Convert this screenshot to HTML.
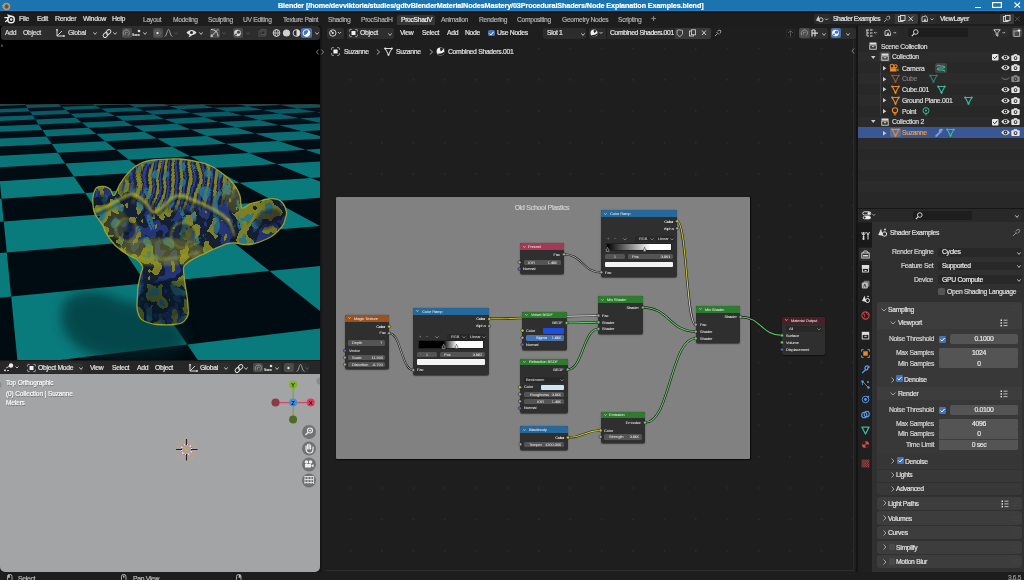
<!DOCTYPE html>
<html><head><meta charset="utf-8"><style>*{box-sizing:border-box}
html,body{margin:0;padding:0}
body{width:1024px;height:580px;overflow:hidden;background:#161616;position:relative;font-family:"Liberation Sans",sans-serif;color:#dcdcdc}
.a{position:absolute}
.t{position:absolute;white-space:nowrap;line-height:1;letter-spacing:-0.3px;will-change:transform;-webkit-text-stroke:0.2px currentColor}
svg{overflow:visible}
</style></head><body>
<div class="a" style="left:0.0px;top:0.0px;width:1024.0px;height:11.0px;background:#1d72b0;"></div>
<div class="a" style="left:0.0px;top:9.7px;width:1024.0px;height:1.2px;background:#1a80c8;"></div>
<svg class="a" style="left:1.0px;top:2.0px" width="10" height="8" viewBox="0 0 10 8"><circle cx="5.5" cy="4.5" r="3" fill="none" stroke="#f08a24" stroke-width="1.6"/><circle cx="5.5" cy="4.5" r="1.2" fill="#1f5a90"/><path d="M1 3.5 L4 3.6 M1.5 5.5 L3.5 5" stroke="#f08a24" stroke-width="1.1"/></svg>
<div class="t" style="left:277.5px;top:1.51px;font-size:7.2px;color:#ffffff;font-weight:bold;letter-spacing:-0.1px">Blender [/home/devviktoria/studies/gdtvBlenderMaterialNodesMastery/03ProceduralShaders/Node Explanation Examples.blend]</div>
<div class="a" style="left:975.0px;top:7.0px;width:5.5px;height:1.0px;background:#ffffff;"></div>
<svg class="a" style="left:992.0px;top:2.0px" width="10" height="6" viewBox="0 0 10 6"><rect x="0.6" y="0.6" width="8.8" height="4.8" fill="none" stroke="#fff" stroke-width="1.2"/></svg>
<svg class="a" style="left:1014.0px;top:2.0px" width="7" height="6" viewBox="0 0 7 6"><path d="M0.5 0.5 L6 5.5 M6 0.5 L0.5 5.5" stroke="#fff" stroke-width="1.1"/></svg>
<div class="a" style="left:0.0px;top:11.0px;width:1024.0px;height:15.0px;background:#1d1d1d;"></div>
<div class="a" style="left:0.0px;top:11.2px;width:1024.0px;height:1.4px;background:#1c1209;"></div>
<svg class="a" style="left:4.0px;top:13.5px" width="12" height="10" viewBox="0 0 12 10"><circle cx="7" cy="5.5" r="3.3" fill="none" stroke="#ececec" stroke-width="1.5"/><circle cx="7.2" cy="5.5" r="1.2" fill="#ececec"/><path d="M0.8 3.6 H5 M3.8 1 L7 2.4 M1.6 7.6 L4.2 5.6" stroke="#ececec" stroke-width="1.3" stroke-linecap="round"/></svg>
<div class="t" style="left:19.0px;top:15.07px;font-size:7px;color:#e0e0e0;">File</div>
<div class="t" style="left:37.0px;top:15.07px;font-size:7px;color:#e0e0e0;">Edit</div>
<div class="t" style="left:55.0px;top:15.07px;font-size:7px;color:#e0e0e0;">Render</div>
<div class="t" style="left:82.5px;top:15.07px;font-size:7px;color:#e0e0e0;">Window</div>
<div class="t" style="left:112.0px;top:15.07px;font-size:7px;color:#e0e0e0;">Help</div>
<div class="a" style="left:396.5px;top:14.5px;width:38.0px;height:10.5px;background:#363636;border-radius:2.5px 2.5px 0 0"></div>
<div class="t" style="left:143.0px;top:16.93px;font-size:6.7px;color:#b0b0b0;">Layout</div>
<div class="t" style="left:172.5px;top:16.93px;font-size:6.7px;color:#b0b0b0;">Modeling</div>
<div class="t" style="left:207.5px;top:16.93px;font-size:6.7px;color:#b0b0b0;">Sculpting</div>
<div class="t" style="left:243.0px;top:16.93px;font-size:6.7px;color:#b0b0b0;">UV Editing</div>
<div class="t" style="left:282.7px;top:16.93px;font-size:6.7px;color:#b0b0b0;">Texture Paint</div>
<div class="t" style="left:328.0px;top:16.93px;font-size:6.7px;color:#b0b0b0;">Shading</div>
<div class="t" style="left:361.0px;top:16.93px;font-size:6.7px;color:#b0b0b0;">ProcShadH</div>
<div class="t" style="left:401.0px;top:16.93px;font-size:6.7px;color:#f0f0f0;">ProcShadV</div>
<div class="t" style="left:440.7px;top:16.93px;font-size:6.7px;color:#b0b0b0;">Animation</div>
<div class="t" style="left:479.0px;top:16.93px;font-size:6.7px;color:#b0b0b0;">Rendering</div>
<div class="t" style="left:517.0px;top:16.93px;font-size:6.7px;color:#b0b0b0;">Compositing</div>
<div class="t" style="left:561.5px;top:16.93px;font-size:6.7px;color:#b0b0b0;">Geometry Nodes</div>
<div class="t" style="left:617.5px;top:16.93px;font-size:6.7px;color:#b0b0b0;">Scripting</div>
<div class="t" style="left:650.5px;top:14.88px;font-size:9px;color:#a0a0a0;">+</div>
<div class="a" style="left:813.5px;top:14.0px;width:16.5px;height:9.5px;background:#2c2c2c;border-radius:2px 0 0 2px"></div>
<svg class="a" style="left:815.0px;top:15.0px" width="14" height="8" viewBox="0 0 14 8"><path d="M3.5 0.5 L1 5.5 L5 6.5 Z" fill="#ccc"/><circle cx="6" cy="4.8" r="2" fill="none" stroke="#ccc" stroke-width="1"/><path d="M10 3.5 L11.5 5 L13 3.5" fill="none" stroke="#ccc" stroke-width="0.9"/></svg>
<div class="a" style="left:830.0px;top:14.0px;width:65.0px;height:9.5px;background:#282828;"></div>
<div class="t" style="left:833.0px;top:15.54px;font-size:6.8px;color:#e6e6e6;letter-spacing:-0.42px">Shader Examples</div>
<svg class="a" style="left:883.0px;top:15.0px" width="8" height="8" viewBox="0 0 8 8"><path d="M1 7 L3.5 4.5 M2.5 3 L5 5.5 M3.5 2 L6 1 L7 2 L6 4.5" stroke="#aaa" fill="none" stroke-width="0.9"/></svg>
<div class="a" style="left:895.0px;top:14.0px;width:22.5px;height:9.5px;background:#3a3a3a;border-radius:0 2px 2px 0"></div>
<svg class="a" style="left:897.0px;top:15.0px" width="20" height="8" viewBox="0 0 20 8"><rect x="1.5" y="1.5" width="4.5" height="5" fill="none" stroke="#ddd" stroke-width="0.9"/><rect x="3.5" y="0.5" width="4.5" height="5" fill="#3a3a3a" stroke="#ddd" stroke-width="0.9"/><path d="M11.5 1.5 L16 6 M16 1.5 L11.5 6" stroke="#ddd" stroke-width="0.9"/></svg>
<div class="a" style="left:919.5px;top:14.0px;width:16.0px;height:9.5px;background:#2c2c2c;border-radius:2px 0 0 2px"></div>
<svg class="a" style="left:921.0px;top:15.0px" width="14" height="8" viewBox="0 0 14 8"><path d="M1 2 L5 0.8 L6.5 3.5 L6.5 6.5 L1 6.5 Z" fill="none" stroke="#ccc" stroke-width="0.9"/><path d="M2.5 6 L4 3 L5.5 6Z" fill="#ccc"/><path d="M9.5 3.5 L11 5 L12.5 3.5" fill="none" stroke="#ccc" stroke-width="0.9"/></svg>
<div class="a" style="left:935.5px;top:14.0px;width:64.5px;height:9.5px;background:#282828;"></div>
<div class="t" style="left:940.0px;top:15.54px;font-size:6.8px;color:#e6e6e6;">ViewLayer</div>
<div class="a" style="left:1000.0px;top:14.0px;width:14.0px;height:9.5px;background:#3a3a3a;"></div>
<svg class="a" style="left:1002.0px;top:15.0px" width="10" height="8" viewBox="0 0 10 8"><rect x="1.5" y="1.5" width="4.5" height="5" fill="none" stroke="#ddd" stroke-width="0.9"/><rect x="3.5" y="0.5" width="4.5" height="5" fill="#3a3a3a" stroke="#ddd" stroke-width="0.9"/></svg>
<svg class="a" style="left:1014.0px;top:15.0px" width="8" height="8" viewBox="0 0 8 8"><path d="M1 1.5 L5.5 6 M5.5 1.5 L1 6" stroke="#555" stroke-width="0.9"/></svg>
<div class="a" style="left:0;top:26px;width:320px;height:334px;background:#000;overflow:hidden">
<svg class="a" style="left:0;top:-26px" width="320" height="360" viewBox="0 0 320 360"><defs><clipPath id="cp1"><rect x="0" y="104.3" width="320" height="260"/></clipPath><radialGradient id="shd" cx="0.5" cy="0.5" r="0.5"><stop offset="0" stop-color="#0a3e48" stop-opacity="0.85"/><stop offset="1" stop-color="#0a3e48" stop-opacity="0"/></radialGradient><linearGradient id="fog" x1="0" y1="0" x2="0" y2="1"><stop offset="0" stop-color="#001830" stop-opacity="0.4"/><stop offset="0.35" stop-color="#001830" stop-opacity="0.15"/><stop offset="1" stop-color="#001830" stop-opacity="0"/></linearGradient><pattern id="mk" width="9" height="9" patternUnits="userSpaceOnUse" patternTransform="rotate(70)"><rect width="9" height="9" fill="#2e3f6e"/><rect width="3.5" height="9" fill="#9a9a2a"/><rect x="5" width="1.5" height="9" fill="#3d9aa8" opacity="0.6"/></pattern></defs><rect x="0" y="104.3" width="320" height="260" fill="#010c12"/><path clip-path="url(#cp1)" d="M-136.5 311.2L11.2 296.6L6.8 252.4L-113.8 262.6ZM-98.2 229.2L3.7 221.5L1.5 198.7L-86.8 204.7ZM-78.1 186.0L-0.2 181.2L-1.6 167.3L-71.2 171.3ZM-65.7 159.4L-2.7 156.0L-3.6 146.7L-61.1 149.6ZM-57.3 141.4L-4.4 138.8L-5.1 132.1L-54.0 134.4ZM17.9 365.1L187.3 344.5L145.9 283.2L11.2 296.6ZM6.8 252.4L118.7 242.9L99.4 214.4L3.7 221.5ZM1.5 198.7L85.1 193.1L73.9 176.6L-0.2 181.2ZM-1.6 167.3L65.1 163.5L57.8 152.8L-2.7 156.0ZM-3.6 146.7L51.8 143.9L46.7 136.4L-4.4 138.8ZM-5.1 132.1L42.4 130.0L38.6 124.4L-5.6 126.3ZM-6.1 121.3L35.4 119.5L32.5 115.2L-6.6 116.9ZM-7.0 112.9L29.9 111.4L27.6 108.0L-7.3 109.4ZM-7.6 106.2L25.5 105.0L23.7 102.2L-7.9 103.4ZM257.7 448.7L454.4 417.1L339.2 326.1L187.3 344.5ZM145.9 283.2L269.5 271.0L222.9 234.1L118.7 242.9ZM99.4 214.4L189.4 207.6L164.2 187.8L85.1 193.1ZM73.9 176.6L144.6 172.3L128.9 159.8L65.1 163.5ZM57.8 152.8L116.1 149.7L105.3 141.2L51.8 143.9ZM46.7 136.4L96.2 134.0L88.4 127.8L42.4 130.0ZM38.6 124.4L81.7 122.5L75.7 117.8L35.4 119.5ZM32.5 115.2L70.5 113.7L65.9 110.0L29.9 111.4ZM27.6 108.0L61.7 106.7L58.0 103.8L25.5 105.0ZM23.7 102.2L54.6 101.1L51.5 98.7L22.0 99.7ZM339.2 326.1L476.1 309.4L383.3 259.7L269.5 271.0ZM222.9 234.1L320.0 225.9L274.2 201.3L189.4 207.6ZM164.2 187.8L239.4 182.7L212.1 168.1L144.6 172.3ZM128.9 159.8L190.2 156.3L172.1 146.7L116.1 149.7ZM105.3 141.2L157.0 138.6L144.2 131.7L96.2 134.0ZM88.4 127.8L133.1 125.8L123.5 120.7L81.7 122.5ZM75.7 117.8L115.1 116.1L107.7 112.2L70.5 113.7ZM65.9 110.0L101.0 108.6L95.1 105.4L61.7 106.7ZM58.0 103.8L89.7 102.6L84.9 100.0L54.6 101.1ZM383.3 259.7L488.2 249.3L410.9 218.2L320.0 225.9ZM274.2 201.3L354.2 195.3L310.8 177.9L239.4 182.7ZM212.1 168.1L276.6 164.1L249.0 153.0L190.2 156.3ZM172.1 146.7L226.1 143.8L206.9 136.1L157.0 138.6ZM144.2 131.7L190.6 129.5L176.5 123.8L133.1 125.8ZM123.5 120.7L164.2 118.9L153.4 114.5L115.1 116.1ZM107.7 112.2L143.9 110.7L135.4 107.3L101.0 108.6ZM95.1 105.4L127.8 104.2L120.9 101.4L89.7 102.6ZM84.9 100.0L114.6 98.9L108.9 96.6L80.5 97.6ZM310.8 177.9L378.8 173.3L338.3 160.3L276.6 164.1ZM249.0 153.0L305.4 149.7L278.2 141.0L226.1 143.8ZM206.9 136.1L255.2 133.6L235.6 127.3L190.6 129.5ZM176.5 123.8L218.6 121.9L203.8 117.1L164.2 118.9ZM153.4 114.5L190.8 112.9L179.3 109.2L143.9 110.7ZM135.4 107.3L169.0 105.9L159.7 102.9L127.8 104.2ZM120.9 101.4L151.3 100.3L143.8 97.8L114.6 98.9ZM338.3 160.3L397.4 156.7L359.7 146.6L305.4 149.7ZM278.2 141.0L328.4 138.3L301.9 131.2L255.2 133.6ZM235.6 127.3L279.2 125.2L259.6 120.0L218.6 121.9ZM203.8 117.1L242.4 115.4L227.3 111.4L190.8 112.9ZM179.3 109.2L213.8 107.8L201.8 104.6L169.0 105.9ZM159.7 102.9L191.0 101.7L181.2 99.1L151.3 100.3ZM143.8 97.8L172.3 96.8L164.2 94.6L136.8 95.6ZM301.9 131.2L347.1 129.0L321.5 123.2L279.2 125.2ZM259.6 120.0L299.4 118.2L280.0 113.8L242.4 115.4ZM227.3 111.4L262.8 109.9L247.6 106.4L213.8 107.8ZM201.8 104.6L233.9 103.3L221.6 100.6L191.0 101.7ZM181.2 99.1L210.5 98.0L200.4 95.7L172.3 96.8ZM321.5 123.2L362.6 121.2L338.1 116.4L299.4 118.2ZM280.0 113.8L316.6 112.1L297.5 108.4L262.8 109.9ZM247.6 106.4L280.5 105.1L265.3 102.1L233.9 103.3ZM221.6 100.6L251.6 99.4L239.2 97.0L210.5 98.0ZM200.4 95.7L227.9 94.7L217.5 92.7L191.1 93.6ZM338.1 116.4L375.8 114.6L352.2 110.6L316.6 112.1ZM297.5 108.4L331.4 107.0L312.8 103.8L280.5 105.1ZM265.3 102.1L296.1 100.9L281.0 98.3L251.6 99.4ZM239.2 97.0L267.3 95.9L254.9 93.7L227.9 94.7ZM312.8 103.8L344.3 102.5L326.2 99.7L296.1 100.9ZM281.0 98.3L309.8 97.1L294.9 94.9L267.3 95.9ZM254.9 93.7L281.4 92.8L269.0 90.9L243.5 91.8ZM326.2 99.7L355.6 98.5L338.0 96.1L309.8 97.1ZM294.9 94.9L322.0 93.8L307.4 91.8L281.4 92.8ZM338.0 96.1L365.6 95.0L348.5 92.8L322.0 93.8ZM307.4 91.8L332.9 90.9L318.6 89.1L294.0 90.0Z" fill="#0a7b7d"/><rect x="0" y="104.3" width="320" height="80" fill="url(#fog)"/><line x1="0" y1="104.5" x2="320" y2="104.5" stroke="#5a4030" stroke-width="0.6" opacity="0.7"/><path d="M66 300 C80 288 105 290 120 300 C150 305 180 315 188 335 C190 352 160 362 120 360 C90 358 68 345 62 325 C60 315 62 305 66 300 Z" fill="#04262c" opacity="0.6" filter="url(#blur2)"/><filter id="magic" x="70" y="140" width="240" height="210" filterUnits="userSpaceOnUse" color-interpolation-filters="sRGB"><feTurbulence type="fractalNoise" baseFrequency="0.022" numOctaves="2" seed="3" result="t"/><feDisplacementMap in="SourceGraphic" in2="t" scale="22" xChannelSelector="R" yChannelSelector="G"/><feGaussianBlur stdDeviation="0.5"/></filter><filter id="blotch" x="70" y="140" width="240" height="210" filterUnits="userSpaceOnUse" color-interpolation-filters="sRGB"><feTurbulence type="fractalNoise" baseFrequency="0.055 0.045" numOctaves="3" seed="4" result="n"/><feColorMatrix in="n" type="matrix" values="1 0 0 0 0  1 0 0 0 0  1 0 0 0 0  0 0 0 0 1"/><feComponentTransfer><feFuncR type="discrete" tableValues="0.08 0.20 0.54 0.09 0.16 0.55 0.08"/><feFuncG type="discrete" tableValues="0.11 0.50 0.55 0.13 0.22 0.56 0.11"/><feFuncB type="discrete" tableValues="0.18 0.55 0.14 0.21 0.50 0.14 0.18"/></feComponentTransfer><feGaussianBlur stdDeviation="0.5"/></filter><radialGradient id="domem" cx="0.5" cy="0.5" r="0.5"><stop offset="0.6" stop-color="#fff"/><stop offset="1" stop-color="#fff" stop-opacity="0"/></radialGradient><mask id="domemask" maskUnits="userSpaceOnUse" x="70" y="140" width="240" height="210"><ellipse cx="180" cy="182" rx="72" ry="32" fill="url(#domem)"/></mask><filter id="speck" x="70" y="140" width="240" height="210" filterUnits="userSpaceOnUse" color-interpolation-filters="sRGB"><feTurbulence type="turbulence" baseFrequency="0.09 0.06" numOctaves="1" seed="9" result="n"/><feColorMatrix in="n" type="matrix" values="0 0 0 0 0.22  0 0 0 0 0.52  0 0 0 0 0.60  10 0 0 0 -2.7" /></filter><clipPath id="mkc"><path d="M97.4 187.2C99.0 186.4 101.9 186.2 104.0 186.5C106.1 186.8 108.3 187.5 110.0 189.0C111.7 190.5 112.3 196.3 114.0 195.5C115.7 194.7 117.9 187.4 120.0 184.0C122.1 180.6 124.1 177.6 126.4 174.8C128.7 172.1 131.2 169.6 134.0 167.5C136.8 165.4 139.7 163.7 142.9 162.4C146.1 161.2 149.6 160.5 153.0 160.0C156.4 159.5 159.1 159.5 163.6 159.3C168.1 159.1 173.8 158.5 180.0 159.0C186.2 159.5 195.4 161.2 200.7 162.4C206.0 163.7 208.6 164.8 212.0 166.5C215.4 168.2 218.6 170.6 221.4 172.7C224.2 174.8 226.6 176.6 229.0 179.0C231.4 181.4 234.0 184.4 235.8 187.2C237.6 190.0 239.0 192.6 240.0 196.0C241.0 199.4 240.3 206.6 242.0 207.9C243.7 209.2 247.2 205.0 250.0 204.0C252.8 203.0 256.1 202.4 258.6 201.7C261.1 200.9 262.6 200.0 265.0 199.5C267.4 199.0 270.7 198.5 273.0 198.6C275.3 198.7 277.3 199.1 279.0 200.0C280.7 200.9 282.1 201.8 283.4 203.8C284.6 205.8 286.1 209.6 286.5 212.0C286.9 214.4 286.0 215.9 285.5 218.0C285.0 220.1 284.6 222.2 283.4 224.4C282.1 226.6 280.1 228.9 278.0 231.0C275.9 233.1 273.7 235.1 271.0 236.8C268.3 238.5 265.1 239.8 262.0 241.0C258.9 242.2 255.6 243.4 252.4 244.0C249.2 244.6 245.8 244.7 243.0 244.5C240.2 244.3 238.3 243.2 235.8 243.0C233.3 242.8 230.1 243.1 228.0 243.5C225.9 243.9 225.6 244.3 223.3 245.2C221.0 246.1 216.8 247.7 214.0 249.0C211.2 250.3 208.9 251.6 206.2 252.8C203.5 254.1 200.5 255.2 198.0 256.5C195.5 257.8 193.0 259.1 191.0 260.4C189.0 261.6 187.2 262.7 186.0 264.0C184.8 265.3 183.8 265.4 183.5 268.0C183.2 270.6 184.0 275.6 184.4 279.3C184.8 283.0 185.5 286.8 186.0 290.0C186.5 293.2 186.9 294.4 187.3 298.3C187.7 302.2 188.4 310.1 188.2 313.5C188.0 316.9 187.1 317.4 186.0 319.0C184.9 320.6 183.6 322.1 181.6 323.0C179.6 323.9 176.5 324.2 174.0 324.5C171.5 324.8 169.2 324.9 166.4 324.9C163.6 324.9 159.8 324.8 157.0 324.5C154.2 324.2 151.6 323.7 149.3 323.0C147.0 322.3 144.6 321.4 143.0 320.5C141.4 319.6 140.7 318.9 139.8 317.3C138.9 315.7 138.0 312.9 137.5 311.0C137.0 309.1 137.0 308.4 137.0 305.9C137.0 303.4 137.3 299.1 137.5 296.0C137.7 292.9 137.4 290.7 138.0 287.0C138.6 283.3 140.0 276.9 140.8 273.6C141.6 270.3 143.2 269.2 142.7 267.0C142.2 264.8 139.9 262.1 138.0 260.4C136.1 258.6 133.2 257.8 131.0 256.5C128.8 255.2 127.0 254.4 124.7 252.8C122.4 251.2 119.2 249.0 117.0 247.0C114.8 245.0 113.3 243.3 111.5 241.0C109.7 238.7 107.4 235.5 106.0 233.0C104.6 230.5 104.2 228.2 103.0 226.0C101.8 223.8 100.3 222.0 99.0 220.0C97.7 218.0 96.0 216.0 95.0 214.0C94.0 212.0 93.6 210.6 93.3 207.9C93.0 205.2 92.7 200.4 92.9 197.6C93.1 194.8 93.8 192.7 94.5 191.0C95.2 189.3 95.8 187.9 97.4 187.2Z"/></clipPath><filter id="blur2" x="-50%" y="-50%" width="200%" height="200%"><feGaussianBlur stdDeviation="6"/></filter><filter id="blur1" x="-20%" y="-20%" width="140%" height="140%"><feGaussianBlur stdDeviation="1.2"/></filter><radialGradient id="mshade" cx="0.45" cy="0.4" r="0.65"><stop offset="0.55" stop-color="#000" stop-opacity="0"/><stop offset="1" stop-color="#000" stop-opacity="0.45"/></radialGradient><g clip-path="url(#mkc)"><rect x="70" y="140" width="240" height="210" filter="url(#blotch)"/><g mask="url(#domemask)"><g filter="url(#magic)"><rect x="70" y="140" width="240" height="210" fill="#18223c"/><g transform="rotate(12 185 240)"><rect x="-70.0" y="60" width="3.2" height="360" fill="#8e8e26"/><rect x="-65.8" y="60" width="2.0" height="360" fill="#3446a0"/><rect x="-61.5" y="60" width="3.2" height="360" fill="#8e8e26"/><rect x="-57.3" y="60" width="2.0" height="360" fill="#3446a0"/><rect x="-53.0" y="60" width="3.2" height="360" fill="#8e8e26"/><rect x="-48.8" y="60" width="2.0" height="360" fill="#3446a0"/><rect x="-44.5" y="60" width="3.2" height="360" fill="#8e8e26"/><rect x="-40.3" y="60" width="2.0" height="360" fill="#3446a0"/><rect x="-36.0" y="60" width="3.2" height="360" fill="#8e8e26"/><rect x="-31.8" y="60" width="2.0" height="360" fill="#3446a0"/><rect x="-27.5" y="60" width="3.2" height="360" fill="#8e8e26"/><rect x="-23.3" y="60" width="2.0" height="360" fill="#3446a0"/><rect x="-19.0" y="60" width="3.2" height="360" fill="#8e8e26"/><rect x="-14.8" y="60" width="2.0" height="360" fill="#3446a0"/><rect x="-10.5" y="60" width="3.2" height="360" fill="#8e8e26"/><rect x="-6.3" y="60" width="2.0" height="360" fill="#3446a0"/><rect x="-2.0" y="60" width="3.2" height="360" fill="#8e8e26"/><rect x="2.2" y="60" width="2.0" height="360" fill="#3446a0"/><rect x="6.5" y="60" width="3.2" height="360" fill="#8e8e26"/><rect x="10.7" y="60" width="2.0" height="360" fill="#3446a0"/><rect x="15.0" y="60" width="3.2" height="360" fill="#8e8e26"/><rect x="19.2" y="60" width="2.0" height="360" fill="#3446a0"/><rect x="23.5" y="60" width="3.2" height="360" fill="#8e8e26"/><rect x="27.7" y="60" width="2.0" height="360" fill="#3446a0"/><rect x="32.0" y="60" width="3.2" height="360" fill="#8e8e26"/><rect x="36.2" y="60" width="2.0" height="360" fill="#3446a0"/><rect x="40.5" y="60" width="3.2" height="360" fill="#8e8e26"/><rect x="44.7" y="60" width="2.0" height="360" fill="#3446a0"/><rect x="49.0" y="60" width="3.2" height="360" fill="#8e8e26"/><rect x="53.2" y="60" width="2.0" height="360" fill="#3446a0"/><rect x="57.5" y="60" width="3.2" height="360" fill="#8e8e26"/><rect x="61.7" y="60" width="2.0" height="360" fill="#3446a0"/><rect x="66.0" y="60" width="3.2" height="360" fill="#8e8e26"/><rect x="70.2" y="60" width="2.0" height="360" fill="#3446a0"/><rect x="74.5" y="60" width="3.2" height="360" fill="#8e8e26"/><rect x="78.7" y="60" width="2.0" height="360" fill="#3446a0"/><rect x="83.0" y="60" width="3.2" height="360" fill="#8e8e26"/><rect x="87.2" y="60" width="2.0" height="360" fill="#3446a0"/><rect x="91.5" y="60" width="3.2" height="360" fill="#8e8e26"/><rect x="95.7" y="60" width="2.0" height="360" fill="#3446a0"/><rect x="100.0" y="60" width="3.2" height="360" fill="#8e8e26"/><rect x="104.2" y="60" width="2.0" height="360" fill="#3446a0"/><rect x="108.5" y="60" width="3.2" height="360" fill="#8e8e26"/><rect x="112.7" y="60" width="2.0" height="360" fill="#3446a0"/><rect x="117.0" y="60" width="3.2" height="360" fill="#8e8e26"/><rect x="121.2" y="60" width="2.0" height="360" fill="#3446a0"/><rect x="125.5" y="60" width="3.2" height="360" fill="#8e8e26"/><rect x="129.7" y="60" width="2.0" height="360" fill="#3446a0"/><rect x="134.0" y="60" width="3.2" height="360" fill="#8e8e26"/><rect x="138.2" y="60" width="2.0" height="360" fill="#3446a0"/><rect x="142.5" y="60" width="3.2" height="360" fill="#8e8e26"/><rect x="146.7" y="60" width="2.0" height="360" fill="#3446a0"/><rect x="151.0" y="60" width="3.2" height="360" fill="#8e8e26"/><rect x="155.2" y="60" width="2.0" height="360" fill="#3446a0"/><rect x="159.5" y="60" width="3.2" height="360" fill="#8e8e26"/><rect x="163.7" y="60" width="2.0" height="360" fill="#3446a0"/><rect x="168.0" y="60" width="3.2" height="360" fill="#8e8e26"/><rect x="172.2" y="60" width="2.0" height="360" fill="#3446a0"/><rect x="176.5" y="60" width="3.2" height="360" fill="#8e8e26"/><rect x="180.7" y="60" width="2.0" height="360" fill="#3446a0"/><rect x="185.0" y="60" width="3.2" height="360" fill="#8e8e26"/><rect x="189.2" y="60" width="2.0" height="360" fill="#3446a0"/><rect x="193.5" y="60" width="3.2" height="360" fill="#8e8e26"/><rect x="197.7" y="60" width="2.0" height="360" fill="#3446a0"/><rect x="202.0" y="60" width="3.2" height="360" fill="#8e8e26"/><rect x="206.2" y="60" width="2.0" height="360" fill="#3446a0"/><rect x="210.5" y="60" width="3.2" height="360" fill="#8e8e26"/><rect x="214.7" y="60" width="2.0" height="360" fill="#3446a0"/><rect x="219.0" y="60" width="3.2" height="360" fill="#8e8e26"/><rect x="223.2" y="60" width="2.0" height="360" fill="#3446a0"/><rect x="227.5" y="60" width="3.2" height="360" fill="#8e8e26"/><rect x="231.7" y="60" width="2.0" height="360" fill="#3446a0"/><rect x="236.0" y="60" width="3.2" height="360" fill="#8e8e26"/><rect x="240.2" y="60" width="2.0" height="360" fill="#3446a0"/><rect x="244.5" y="60" width="3.2" height="360" fill="#8e8e26"/><rect x="248.7" y="60" width="2.0" height="360" fill="#3446a0"/><rect x="253.0" y="60" width="3.2" height="360" fill="#8e8e26"/><rect x="257.2" y="60" width="2.0" height="360" fill="#3446a0"/><rect x="261.5" y="60" width="3.2" height="360" fill="#8e8e26"/><rect x="265.7" y="60" width="2.0" height="360" fill="#3446a0"/><rect x="270.0" y="60" width="3.2" height="360" fill="#8e8e26"/><rect x="274.2" y="60" width="2.0" height="360" fill="#3446a0"/><rect x="278.5" y="60" width="3.2" height="360" fill="#8e8e26"/><rect x="282.7" y="60" width="2.0" height="360" fill="#3446a0"/><rect x="287.0" y="60" width="3.2" height="360" fill="#8e8e26"/><rect x="291.2" y="60" width="2.0" height="360" fill="#3446a0"/><rect x="295.5" y="60" width="3.2" height="360" fill="#8e8e26"/><rect x="299.7" y="60" width="2.0" height="360" fill="#3446a0"/><rect x="304.0" y="60" width="3.2" height="360" fill="#8e8e26"/><rect x="308.2" y="60" width="2.0" height="360" fill="#3446a0"/><rect x="312.5" y="60" width="3.2" height="360" fill="#8e8e26"/><rect x="316.7" y="60" width="2.0" height="360" fill="#3446a0"/><rect x="321.0" y="60" width="3.2" height="360" fill="#8e8e26"/><rect x="325.2" y="60" width="2.0" height="360" fill="#3446a0"/><rect x="329.5" y="60" width="3.2" height="360" fill="#8e8e26"/><rect x="333.7" y="60" width="2.0" height="360" fill="#3446a0"/><rect x="338.0" y="60" width="3.2" height="360" fill="#8e8e26"/><rect x="342.2" y="60" width="2.0" height="360" fill="#3446a0"/><rect x="346.5" y="60" width="3.2" height="360" fill="#8e8e26"/><rect x="350.7" y="60" width="2.0" height="360" fill="#3446a0"/><rect x="355.0" y="60" width="3.2" height="360" fill="#8e8e26"/><rect x="359.2" y="60" width="2.0" height="360" fill="#3446a0"/><rect x="363.5" y="60" width="3.2" height="360" fill="#8e8e26"/><rect x="367.7" y="60" width="2.0" height="360" fill="#3446a0"/><rect x="372.0" y="60" width="3.2" height="360" fill="#8e8e26"/><rect x="376.2" y="60" width="2.0" height="360" fill="#3446a0"/><rect x="380.5" y="60" width="3.2" height="360" fill="#8e8e26"/><rect x="384.7" y="60" width="2.0" height="360" fill="#3446a0"/><rect x="389.0" y="60" width="3.2" height="360" fill="#8e8e26"/><rect x="393.2" y="60" width="2.0" height="360" fill="#3446a0"/><rect x="397.5" y="60" width="3.2" height="360" fill="#8e8e26"/><rect x="401.7" y="60" width="2.0" height="360" fill="#3446a0"/><rect x="406.0" y="60" width="3.2" height="360" fill="#8e8e26"/><rect x="410.2" y="60" width="2.0" height="360" fill="#3446a0"/><rect x="414.5" y="60" width="3.2" height="360" fill="#8e8e26"/><rect x="418.7" y="60" width="2.0" height="360" fill="#3446a0"/><rect x="423.0" y="60" width="3.2" height="360" fill="#8e8e26"/><rect x="427.2" y="60" width="2.0" height="360" fill="#3446a0"/><rect x="431.5" y="60" width="3.2" height="360" fill="#8e8e26"/><rect x="435.7" y="60" width="2.0" height="360" fill="#3446a0"/><rect x="440.0" y="60" width="3.2" height="360" fill="#8e8e26"/><rect x="444.2" y="60" width="2.0" height="360" fill="#3446a0"/><rect x="448.5" y="60" width="3.2" height="360" fill="#8e8e26"/><rect x="452.7" y="60" width="2.0" height="360" fill="#3446a0"/></g></g></g><rect x="70" y="140" width="240" height="210" filter="url(#speck)" opacity="0.8"/><rect x="80" y="150" width="220" height="190" fill="url(#mshade)"/><rect x="70" y="140" width="240" height="210" fill="#0e1628" opacity="0.1"/><g filter="url(#blur1)"><ellipse cx="268" cy="219" rx="14" ry="9" transform="rotate(-25 268 219)" fill="#0c1626" opacity="0.55"/><ellipse cx="103" cy="202" rx="5" ry="8" fill="#0c1626" opacity="0.5"/><ellipse cx="126.5" cy="230" rx="10" ry="11" fill="#0b1426" opacity="0.45"/><ellipse cx="184" cy="235" rx="12" ry="12" fill="#0b1426" opacity="0.45"/><ellipse cx="126.5" cy="230" rx="10.5" ry="11.5" fill="none" stroke="#a0a030" stroke-width="1.6" opacity="0.65"/><ellipse cx="126.5" cy="230" rx="6" ry="7" fill="none" stroke="#3a4aa0" stroke-width="1.2" opacity="0.6"/><ellipse cx="184" cy="235" rx="13" ry="13" fill="none" stroke="#a0a030" stroke-width="1.6" opacity="0.6"/><ellipse cx="184" cy="235" rx="8.5" ry="8.5" fill="none" stroke="#3a4aa0" stroke-width="1.2" opacity="0.6"/><ellipse cx="184" cy="235" rx="4.5" ry="4.5" fill="none" stroke="#8a8a28" stroke-width="1" opacity="0.5"/><path d="M96.0 211.0C98.3 210.0 104.7 207.4 109.8 204.8C114.9 202.2 122.3 197.2 126.4 195.5C130.5 193.8 131.5 193.5 134.6 194.5C137.7 195.5 141.9 198.8 145.0 201.7C148.1 204.6 150.1 211.3 153.2 212.0C156.3 212.7 160.5 208.2 163.6 205.8C166.7 203.4 168.7 199.3 171.8 197.6C174.9 195.9 178.8 195.2 182.2 195.5C185.6 195.8 188.3 197.9 192.4 199.6C196.5 201.3 202.1 203.4 206.9 205.8C211.7 208.2 217.6 211.2 221.4 214.0C225.2 216.8 227.5 218.7 229.6 222.4C231.7 226.1 233.3 233.7 234.0 236.0" fill="none" stroke="#b0b030" stroke-width="2.4" opacity="0.85"/><path d="M96.0 211.0C98.3 210.0 104.7 207.4 109.8 204.8C114.9 202.2 122.3 197.2 126.4 195.5C130.5 193.8 131.5 193.5 134.6 194.5C137.7 195.5 141.9 198.8 145.0 201.7C148.1 204.6 150.1 211.3 153.2 212.0C156.3 212.7 160.5 208.2 163.6 205.8C166.7 203.4 168.7 199.3 171.8 197.6C174.9 195.9 178.8 195.2 182.2 195.5C185.6 195.8 188.3 197.9 192.4 199.6C196.5 201.3 202.1 203.4 206.9 205.8C211.7 208.2 217.6 211.2 221.4 214.0C225.2 216.8 227.5 218.7 229.6 222.4C231.7 226.1 233.3 233.7 234.0 236.0" transform="translate(0,3.5)" fill="none" stroke="#0c1630" stroke-width="2.5" opacity="0.6"/><ellipse cx="160" cy="252" rx="46" ry="14" fill="#9a9a28" opacity="0.4"/><ellipse cx="115" cy="222" rx="12" ry="16" fill="#9a9a28" opacity="0.25"/><ellipse cx="162" cy="300" rx="22" ry="20" fill="#0c1626" opacity="0.25"/><ellipse cx="235" cy="195" rx="10" ry="18" fill="#9a9a28" opacity="0.3"/><path d="M120 250 C140 262 170 262 200 252" fill="none" stroke="#a0a02a" stroke-width="3" opacity="0.5"/><rect x="130" y="280" width="65" height="50" fill="#0c1626" opacity="0.35"/></g></g><path d="M97.4 187.2C99.0 186.4 101.9 186.2 104.0 186.5C106.1 186.8 108.3 187.5 110.0 189.0C111.7 190.5 112.3 196.3 114.0 195.5C115.7 194.7 117.9 187.4 120.0 184.0C122.1 180.6 124.1 177.6 126.4 174.8C128.7 172.1 131.2 169.6 134.0 167.5C136.8 165.4 139.7 163.7 142.9 162.4C146.1 161.2 149.6 160.5 153.0 160.0C156.4 159.5 159.1 159.5 163.6 159.3C168.1 159.1 173.8 158.5 180.0 159.0C186.2 159.5 195.4 161.2 200.7 162.4C206.0 163.7 208.6 164.8 212.0 166.5C215.4 168.2 218.6 170.6 221.4 172.7C224.2 174.8 226.6 176.6 229.0 179.0C231.4 181.4 234.0 184.4 235.8 187.2C237.6 190.0 239.0 192.6 240.0 196.0C241.0 199.4 240.3 206.6 242.0 207.9C243.7 209.2 247.2 205.0 250.0 204.0C252.8 203.0 256.1 202.4 258.6 201.7C261.1 200.9 262.6 200.0 265.0 199.5C267.4 199.0 270.7 198.5 273.0 198.6C275.3 198.7 277.3 199.1 279.0 200.0C280.7 200.9 282.1 201.8 283.4 203.8C284.6 205.8 286.1 209.6 286.5 212.0C286.9 214.4 286.0 215.9 285.5 218.0C285.0 220.1 284.6 222.2 283.4 224.4C282.1 226.6 280.1 228.9 278.0 231.0C275.9 233.1 273.7 235.1 271.0 236.8C268.3 238.5 265.1 239.8 262.0 241.0C258.9 242.2 255.6 243.4 252.4 244.0C249.2 244.6 245.8 244.7 243.0 244.5C240.2 244.3 238.3 243.2 235.8 243.0C233.3 242.8 230.1 243.1 228.0 243.5C225.9 243.9 225.6 244.3 223.3 245.2C221.0 246.1 216.8 247.7 214.0 249.0C211.2 250.3 208.9 251.6 206.2 252.8C203.5 254.1 200.5 255.2 198.0 256.5C195.5 257.8 193.0 259.1 191.0 260.4C189.0 261.6 187.2 262.7 186.0 264.0C184.8 265.3 183.8 265.4 183.5 268.0C183.2 270.6 184.0 275.6 184.4 279.3C184.8 283.0 185.5 286.8 186.0 290.0C186.5 293.2 186.9 294.4 187.3 298.3C187.7 302.2 188.4 310.1 188.2 313.5C188.0 316.9 187.1 317.4 186.0 319.0C184.9 320.6 183.6 322.1 181.6 323.0C179.6 323.9 176.5 324.2 174.0 324.5C171.5 324.8 169.2 324.9 166.4 324.9C163.6 324.9 159.8 324.8 157.0 324.5C154.2 324.2 151.6 323.7 149.3 323.0C147.0 322.3 144.6 321.4 143.0 320.5C141.4 319.6 140.7 318.9 139.8 317.3C138.9 315.7 138.0 312.9 137.5 311.0C137.0 309.1 137.0 308.4 137.0 305.9C137.0 303.4 137.3 299.1 137.5 296.0C137.7 292.9 137.4 290.7 138.0 287.0C138.6 283.3 140.0 276.9 140.8 273.6C141.6 270.3 143.2 269.2 142.7 267.0C142.2 264.8 139.9 262.1 138.0 260.4C136.1 258.6 133.2 257.8 131.0 256.5C128.8 255.2 127.0 254.4 124.7 252.8C122.4 251.2 119.2 249.0 117.0 247.0C114.8 245.0 113.3 243.3 111.5 241.0C109.7 238.7 107.4 235.5 106.0 233.0C104.6 230.5 104.2 228.2 103.0 226.0C101.8 223.8 100.3 222.0 99.0 220.0C97.7 218.0 96.0 216.0 95.0 214.0C94.0 212.0 93.6 210.6 93.3 207.9C93.0 205.2 92.7 200.4 92.9 197.6C93.1 194.8 93.8 192.7 94.5 191.0C95.2 189.3 95.8 187.9 97.4 187.2Z" fill="none" stroke="#a8a82a" stroke-width="1.3" opacity="0.9"/></svg>
<div class="a" style="left:1.0px;top:0.0px;width:319.0px;height:13.5px;background:#2d2d2d;border-radius:3px"></div>
</div>
<div class="t" style="left:5.0px;top:29.54px;font-size:6.8px;color:#dedede;">Add</div>
<div class="t" style="left:23.0px;top:29.54px;font-size:6.8px;color:#dedede;">Object</div>
<div class="a" style="left:50.0px;top:27.5px;width:51.0px;height:10.5px;background:#2c2c2c;border-radius:2px"></div>
<svg class="a" style="left:56.0px;top:29.0px" width="9" height="8" viewBox="0 0 9 8"><path d="M1 0.5 V7 H8" fill="none" stroke="#ddd" stroke-width="1"/><path d="M1 7 L6 2" stroke="#ddd" stroke-width="0.9"/><circle cx="1" cy="0.8" r="0.9" fill="#ddd"/><circle cx="8" cy="7" r="0.9" fill="#ddd"/></svg>
<div class="t" style="left:68.0px;top:29.54px;font-size:6.8px;color:#dedede;">Global</div>
<svg class="a" style="left:92.5px;top:32.0px" width="4" height="3" viewBox="0 0 4 3"><path d="M0.4 0.4 L2.0 2.4 L3.6 0.4" fill="none" stroke="#cfcfcf" stroke-width="0.9"/></svg>
<svg class="a" style="left:102.0px;top:29.0px" width="10" height="9" viewBox="0 0 10 9"><g transform="rotate(-45 5 4.5)" fill="none" stroke="#ddd" stroke-width="0.95"><rect x="0.3" y="2.6" width="5.4" height="3.8" rx="1.9"/><rect x="4.3" y="2.6" width="5.4" height="3.8" rx="1.9"/></g></svg>
<svg class="a" style="left:112.5px;top:32.0px" width="4" height="3" viewBox="0 0 4 3"><path d="M0.4 0.4 L2.0 2.4 L3.6 0.4" fill="none" stroke="#cfcfcf" stroke-width="0.9"/></svg>
<div class="a" style="left:120.5px;top:27.5px;width:28.0px;height:10.5px;background:#2c2c2c;border-radius:2px"></div>
<div class="a" style="left:121.5px;top:28.0px;width:10.0px;height:9.5px;background:#4a4a4a;border-radius:2px"></div>
<svg class="a" style="left:122.0px;top:29.0px" width="9" height="8" viewBox="0 0 9 8"><path d="M2 6.5 C0 4 2 0.5 5 1 C8 1.5 8 5 6 6.5 M3.5 5.5 C2.5 3.5 4 2.5 5.5 3.5" fill="none" stroke="#999" stroke-width="1"/></svg>
<svg class="a" style="left:132.0px;top:29.0px" width="10" height="8" viewBox="0 0 10 8"><path d="M1 4 V7 M1 6 H7 M4 5 V7 M7 5 V7" stroke="#ddd" stroke-width="1" fill="none"/><circle cx="7" cy="2" r="1.3" fill="#ddd"/></svg>
<svg class="a" style="left:142.5px;top:32.0px" width="4" height="3" viewBox="0 0 4 3"><path d="M0.4 0.4 L2.0 2.4 L3.6 0.4" fill="none" stroke="#cfcfcf" stroke-width="0.9"/></svg>
<div class="a" style="left:152.0px;top:27.5px;width:26.0px;height:10.5px;background:#2c2c2c;border-radius:2px"></div>
<div class="a" style="left:152.5px;top:28.0px;width:10.0px;height:9.5px;background:#4a4a4a;border-radius:2px"></div>
<svg class="a" style="left:153.0px;top:29.0px" width="9" height="8" viewBox="0 0 9 8"><circle cx="4.5" cy="4" r="1.2" fill="#ddd"/><circle cx="4.5" cy="4" r="3" fill="none" stroke="#777" stroke-width="0.6"/></svg>
<svg class="a" style="left:164.0px;top:29.0px" width="9" height="8" viewBox="0 0 9 8"><path d="M0.5 7.5 C3 7 3 0.5 4.5 0.5 C6 0.5 6 7 8.5 7.5" fill="none" stroke="#aaa" stroke-width="0.9"/></svg>
<svg class="a" style="left:173.5px;top:32.0px" width="4" height="3" viewBox="0 0 4 3"><path d="M0.4 0.4 L2.0 2.4 L3.6 0.4" fill="none" stroke="#555" stroke-width="0.9"/></svg>
<svg class="a" style="left:186.0px;top:29.0px" width="11" height="9" viewBox="0 0 11 9"><path d="M0.5 3.5 C3 0 8 0 10.5 3.5 C8 7 3 7 0.5 3.5Z" fill="#ddd"/><circle cx="5.5" cy="3.5" r="1.5" fill="#282828"/><path d="M4 5 L2.5 8.5 L6 6.5" fill="#ddd"/></svg>
<svg class="a" style="left:199.0px;top:32.0px" width="4" height="3" viewBox="0 0 4 3"><path d="M0.4 0.4 L2.0 2.4 L3.6 0.4" fill="none" stroke="#cfcfcf" stroke-width="0.9"/></svg>
<div class="a" style="left:208.5px;top:27.5px;width:21.0px;height:10.5px;background:#2c2c2c;border-radius:2px"></div>
<div class="a" style="left:209.5px;top:28.0px;width:10.0px;height:9.5px;background:#4a4a4a;border-radius:2px"></div>
<svg class="a" style="left:210.0px;top:29.0px" width="9" height="8" viewBox="0 0 9 8"><path d="M1 7.5 L8 0.5 M1 0.5 C5 0.5 8 3 8 7.5 M3 7 L1 7.5 L1.5 5.5" fill="none" stroke="#ddd" stroke-width="0.9"/></svg>
<svg class="a" style="left:222.0px;top:32.0px" width="4" height="3" viewBox="0 0 4 3"><path d="M0.4 0.4 L2.0 2.4 L3.6 0.4" fill="none" stroke="#555" stroke-width="0.9"/></svg>
<div class="a" style="left:232.0px;top:27.5px;width:21.0px;height:10.5px;background:#2c2c2c;border-radius:2px"></div>
<div class="a" style="left:232.5px;top:28.0px;width:10.0px;height:9.5px;background:#4a4a4a;border-radius:2px"></div>
<svg class="a" style="left:233.0px;top:29.0px" width="9" height="8" viewBox="0 0 9 8"><circle cx="4.5" cy="4" r="3.3" fill="#ddd"/><circle cx="5.5" cy="3.2" r="1.6" fill="#4a4a4a"/><circle cx="3" cy="5.5" r="1" fill="#4a4a4a"/></svg>
<svg class="a" style="left:246.0px;top:32.0px" width="4" height="3" viewBox="0 0 4 3"><path d="M0.4 0.4 L2.0 2.4 L3.6 0.4" fill="none" stroke="#555" stroke-width="0.9"/></svg>
<div class="a" style="left:257.0px;top:27.5px;width:11.0px;height:10.5px;background:#2c2c2c;border-radius:2px"></div>
<svg class="a" style="left:258.0px;top:29.0px" width="9" height="8" viewBox="0 0 9 8"><rect x="1" y="2" width="6" height="5" fill="none" stroke="#555" stroke-width="0.9"/><rect x="3" y="0.5" width="5" height="5" fill="none" stroke="#555" stroke-width="0.9"/></svg>
<div class="a" style="left:271.0px;top:27.5px;width:41.0px;height:10.5px;background:#2c2c2c;border-radius:2px"></div>
<svg class="a" style="left:272.0px;top:29.0px" width="9" height="8" viewBox="0 0 9 8"><circle cx="4.5" cy="4" r="3.4" fill="none" stroke="#ddd" stroke-width="0.9"/><ellipse cx="4.5" cy="4" rx="1.5" ry="3.4" fill="none" stroke="#ddd" stroke-width="0.8"/><path d="M1 4 H8" stroke="#ddd" stroke-width="0.8"/></svg>
<svg class="a" style="left:282.0px;top:29.0px" width="9" height="8" viewBox="0 0 9 8"><circle cx="4.5" cy="4" r="3.6" fill="#d0d0d0"/></svg>
<svg class="a" style="left:292.0px;top:29.0px" width="9" height="8" viewBox="0 0 9 8"><circle cx="4.5" cy="4" r="3.4" fill="none" stroke="#ddd" stroke-width="0.9"/><path d="M4.5 0.6 A3.4 3.4 0 0 1 4.5 7.4Z" fill="#ddd"/></svg>
<div class="a" style="left:301.0px;top:28.0px;width:10.5px;height:9.5px;background:#4772b3;border-radius:2px"></div>
<svg class="a" style="left:302.0px;top:29.0px" width="9" height="8" viewBox="0 0 9 8"><circle cx="4.5" cy="4" r="3.4" fill="none" stroke="#fff" stroke-width="0.9"/><path d="M6.5 1.5 A3 3 0 0 1 2 6.5 C4 6 6 4 6.5 1.5Z" fill="#fff"/></svg>
<svg class="a" style="left:314.5px;top:32.0px" width="4" height="3" viewBox="0 0 4 3"><path d="M0.4 0.4 L2.0 2.4 L3.6 0.4" fill="none" stroke="#cfcfcf" stroke-width="0.9"/></svg>
<div class="t" style="left:0.5px;top:41.92px;font-size:6px;color:#888;">›</div>
<div class="a" style="left:0.0px;top:360.0px;width:320.0px;height:1.0px;background:#161616;"></div>
<div class="a" style="left:0.0px;top:361.0px;width:320.0px;height:211.0px;background:#a3a4a6;border-radius:0 0 5px 5px"></div>
<div class="a" style="left:0.0px;top:361.0px;width:320.0px;height:13.0px;background:#272727;"></div>
<svg class="a" style="left:3.0px;top:363.0px" width="18" height="9" viewBox="0 0 18 9"><path d="M1 7.5 H3 M2 6 V8.5 M4 7.5 H6" stroke="#ccc" stroke-width="0.9"/><path d="M3 5 L7 3" stroke="#ccc" stroke-width="0.9"/><circle cx="8" cy="2.5" r="2.2" fill="#eee"/><path d="M12.5 3.5 L14 5 L15.5 3.5" fill="none" stroke="#ccc" stroke-width="0.9"/></svg>
<div class="a" style="left:26.0px;top:362.5px;width:57.0px;height:10.0px;background:#2e2e2e;border-radius:2px"></div>
<svg class="a" style="left:27.0px;top:363.5px" width="9" height="8" viewBox="0 0 9 8"><path d="M0.6 2.4 V1.4 Q0.6 0.4 1.6 0.4 H2.6 M6.4 0.4 H7.4 Q8.4 0.4 8.4 1.4 V2.4 M8.4 5.6 V6.6 Q8.4 7.6 7.4 7.6 H6.4 M2.6 7.6 H1.6 Q0.6 7.6 0.6 6.6 V5.6" fill="none" stroke="#ccc" stroke-width="0.8"/><rect x="2.5" y="2" width="4" height="4" rx="0.6" fill="#f0f0f0"/></svg>
<div class="t" style="left:38.0px;top:364.54px;font-size:6.8px;color:#e2e2e2;">Object Mode</div>
<svg class="a" style="left:78.5px;top:367.0px" width="4" height="3" viewBox="0 0 4 3"><path d="M0.4 0.4 L2.0 2.4 L3.6 0.4" fill="none" stroke="#cfcfcf" stroke-width="0.9"/></svg>
<div class="t" style="left:90.0px;top:364.54px;font-size:6.8px;color:#e2e2e2;">View</div>
<div class="t" style="left:112.0px;top:364.54px;font-size:6.8px;color:#e2e2e2;">Select</div>
<div class="t" style="left:137.0px;top:364.54px;font-size:6.8px;color:#e2e2e2;">Add</div>
<div class="t" style="left:155.0px;top:364.54px;font-size:6.8px;color:#e2e2e2;">Object</div>
<div class="a" style="left:187.5px;top:362.5px;width:42.0px;height:10.0px;background:#2e2e2e;border-radius:2px"></div>
<svg class="a" style="left:189.0px;top:363.5px" width="9" height="8" viewBox="0 0 9 8"><path d="M1 0.5 V7 H8" fill="none" stroke="#ddd" stroke-width="1"/><path d="M1 7 L6 2" stroke="#ddd" stroke-width="0.9"/><circle cx="1" cy="0.8" r="0.9" fill="#ddd"/><circle cx="8" cy="7" r="0.9" fill="#ddd"/></svg>
<div class="t" style="left:200.0px;top:364.54px;font-size:6.8px;color:#e2e2e2;">Global</div>
<svg class="a" style="left:224.0px;top:367.0px" width="4" height="3" viewBox="0 0 4 3"><path d="M0.4 0.4 L2.0 2.4 L3.6 0.4" fill="none" stroke="#cfcfcf" stroke-width="0.9"/></svg>
<svg class="a" style="left:234.0px;top:363.5px" width="10" height="9" viewBox="0 0 10 9"><g transform="rotate(-45 5 4.5)" fill="none" stroke="#ddd" stroke-width="0.95"><rect x="0.3" y="2.6" width="5.4" height="3.8" rx="1.9"/><rect x="4.3" y="2.6" width="5.4" height="3.8" rx="1.9"/></g></svg>
<svg class="a" style="left:244.0px;top:367.0px" width="4" height="3" viewBox="0 0 4 3"><path d="M0.4 0.4 L2.0 2.4 L3.6 0.4" fill="none" stroke="#cfcfcf" stroke-width="0.9"/></svg>
<div class="a" style="left:252.5px;top:362.5px;width:28.0px;height:10.0px;background:#2e2e2e;border-radius:2px"></div>
<div class="a" style="left:253.0px;top:362.7px;width:10.0px;height:9.6px;background:#4a4a4a;border-radius:2px"></div>
<svg class="a" style="left:253.5px;top:363.5px" width="9" height="8" viewBox="0 0 9 8"><path d="M2 6.5 C0 4 2 0.5 5 1 C8 1.5 8 5 6 6.5 M3.5 5.5 C2.5 3.5 4 2.5 5.5 3.5" fill="none" stroke="#999" stroke-width="1"/></svg>
<svg class="a" style="left:264.0px;top:363.5px" width="10" height="8" viewBox="0 0 10 8"><path d="M1 4 V7 M1 6 H7 M4 5 V7 M7 5 V7" stroke="#ddd" stroke-width="1" fill="none"/><circle cx="7" cy="2" r="1.3" fill="#ddd"/></svg>
<svg class="a" style="left:275.0px;top:367.0px" width="4" height="3" viewBox="0 0 4 3"><path d="M0.4 0.4 L2.0 2.4 L3.6 0.4" fill="none" stroke="#cfcfcf" stroke-width="0.9"/></svg>
<div class="a" style="left:283.0px;top:362.5px;width:26.0px;height:10.0px;background:#2e2e2e;border-radius:2px"></div>
<div class="a" style="left:283.5px;top:362.7px;width:10.0px;height:9.6px;background:#4a4a4a;border-radius:2px"></div>
<svg class="a" style="left:284.0px;top:363.5px" width="9" height="8" viewBox="0 0 9 8"><circle cx="4.5" cy="4" r="1.2" fill="#ddd"/></svg>
<svg class="a" style="left:296.0px;top:363.5px" width="9" height="8" viewBox="0 0 9 8"><path d="M0.5 7.5 C3 7 3 0.5 4.5 0.5 C6 0.5 6 7 8.5 7.5" fill="none" stroke="#aaa" stroke-width="0.9"/></svg>
<svg class="a" style="left:305.0px;top:367.0px" width="4" height="3" viewBox="0 0 4 3"><path d="M0.4 0.4 L2.0 2.4 L3.6 0.4" fill="none" stroke="#555" stroke-width="0.9"/></svg>
<div class="t" style="left:6.0px;top:380.20px;font-size:6.5px;color:#f8f8f8;text-shadow:0.5px 0.5px 0.6px rgba(0,0,0,0.35);letter-spacing:-0.15px">Top Orthographic</div>
<div class="t" style="left:6.0px;top:390.50px;font-size:6.5px;color:#f8f8f8;text-shadow:0.5px 0.5px 0.6px rgba(0,0,0,0.35);letter-spacing:-0.1px">(0) Collection | Suzanne</div>
<div class="t" style="left:6.0px;top:400.20px;font-size:6.5px;color:#f8f8f8;text-shadow:0.5px 0.5px 0.6px rgba(0,0,0,0.35);letter-spacing:-0.2px">Meters</div>
<svg class="a" style="left:-2.0px;top:381.0px" width="5" height="8" viewBox="0 0 5 8"><circle cx="0" cy="4" r="3.5" fill="#8a8a8a"/></svg>
<svg class="a" style="left:316.0px;top:377.0px" width="5" height="8" viewBox="0 0 5 8"><circle cx="4" cy="4" r="3.5" fill="#8c8c8c"/></svg>
<svg class="a" style="left:0;top:0" width="1024" height="580"><line x1="275.5" y1="402.6" x2="310.7" y2="402.6" stroke="#d4485a" stroke-width="1.1"/><line x1="293.1" y1="384.8" x2="293.1" y2="419.6" stroke="#7aa52a" stroke-width="1.1"/><circle cx="275.5" cy="402.6" r="4" fill="#8a3b45"/><circle cx="293.1" cy="419.6" r="4" fill="#4e6b22"/><circle cx="310.7" cy="402.6" r="4" fill="#de3c54"/><circle cx="293.1" cy="384.8" r="4" fill="#7fb51c"/><circle cx="293.1" cy="402.6" r="4" fill="#3f8ee0"/><text x="310.7" y="404.8" font-size="6" text-anchor="middle" fill="#3a1010" font-family="Liberation Sans" font-weight="bold">X</text><text x="293.1" y="387" font-size="6" text-anchor="middle" fill="#1d2a08" font-family="Liberation Sans" font-weight="bold">Y</text><text x="293.1" y="404.8" font-size="6" text-anchor="middle" fill="#0a1a30" font-family="Liberation Sans" font-weight="bold">Z</text><circle cx="309" cy="432" r="7" fill="#727272"/><circle cx="309" cy="448.6" r="7" fill="#727272"/><circle cx="309" cy="464.5" r="7" fill="#727272"/><circle cx="309" cy="480.5" r="7" fill="#727272"/><circle cx="310" cy="430.5" r="2.5" fill="none" stroke="#eee" stroke-width="1.1"/><path d="M308 432.5 L305.5 435" stroke="#eee" stroke-width="1.3"/><path d="M308.8 430.5 H311.2 M310 429.3 V431.7" stroke="#eee" stroke-width="0.7"/><path d="M306 449 L306 446 M307.5 449 L307.5 444.5 M309 449 L309 444 M310.5 449 L310.5 445 M306 448.5 C306 452 308 453 310 453 C312 453 313 451 313 449 L313 447" stroke="#eee" stroke-width="1.2" fill="none" stroke-linecap="round"/><circle cx="306.5" cy="462" r="1.8" fill="#eee"/><circle cx="310.5" cy="462" r="1.8" fill="#eee"/><rect x="305" y="464" width="6" height="3.5" fill="#eee"/><path d="M311 465.8 L313.5 464 V467.5Z" fill="#eee"/><path d="M304.5 476.5 H313.5 M304.5 479.5 H313.5 M304.5 482.5 H313.5 M305 476 V484 M308 476 V484 M311 476 V484 M313.5 476 V484" stroke="#eee" stroke-width="0.8" fill="none"/><path d="M178 452 C176 446 181 440 186 438 M192 441 C197 446 196 455 190 459 M178 455 C182 461 189 462 193 458" stroke="#e0a070" stroke-width="0.8" fill="none" opacity="0.7"/><circle cx="186.5" cy="449.5" r="5.2" fill="none" stroke="#fff" stroke-width="1.1"/><circle cx="186.5" cy="449.5" r="5.2" fill="none" stroke="#e04040" stroke-width="1.1" stroke-dasharray="1.6 1.6"/><path d="M176 449.5 H182 M191 449.5 H197.5 M186.5 439 V445 M186.5 454 V460.5" stroke="#222" stroke-width="1.1"/><circle cx="186.5" cy="449.5" r="1.2" fill="#f0a020"/></svg>
<div class="a" style="left:320.0px;top:26.0px;width:2.0px;height:546.0px;background:#161616;"></div>
<div class="a" style="left:322.0px;top:26.0px;width:535.0px;height:546.0px;background:#1e1e1e;"></div>
<svg class="a" style="left:322px;top:40px" width="535" height="532"><defs><pattern id="dots" width="31.4" height="31.4" patternUnits="userSpaceOnUse" x="27.7" y="7.7"><rect x="0" y="0" width="1.5" height="1.5" fill="#2d2d2d"/></pattern></defs><rect width="535" height="532" fill="url(#dots)"/></svg>
<div class="a" style="left:853.0px;top:40.0px;width:0.8px;height:532.0px;background:#2a2a2a;"></div>
<div class="a" style="left:855.5px;top:26.0px;width:2.5px;height:546.0px;background:#141414;"></div>
<div class="a" style="left:326.5px;top:27.5px;width:17.0px;height:11.0px;background:#2e2e2e;border-radius:2px"></div>
<svg class="a" style="left:329.0px;top:29.0px" width="14" height="8" viewBox="0 0 14 8"><circle cx="3.8" cy="4" r="3.2" fill="none" stroke="#ddd" stroke-width="0.9"/><path d="M3.8 4 L2 1.8" stroke="#ddd" stroke-width="1"/><circle cx="3.8" cy="4" r="1.1" fill="#ddd"/><path d="M9 3 L10.5 4.5 L12 3" fill="none" stroke="#ccc" stroke-width="0.9"/></svg>
<div class="a" style="left:347.0px;top:27.5px;width:47.0px;height:11.0px;background:#2e2e2e;border-radius:2px"></div>
<svg class="a" style="left:348.5px;top:29.0px" width="9" height="8" viewBox="0 0 9 8"><path d="M0.6 2.4 V1.4 Q0.6 0.4 1.6 0.4 H2.6 M6.4 0.4 H7.4 Q8.4 0.4 8.4 1.4 V2.4 M8.4 5.6 V6.6 Q8.4 7.6 7.4 7.6 H6.4 M2.6 7.6 H1.6 Q0.6 7.6 0.6 6.6 V5.6" fill="none" stroke="#ccc" stroke-width="0.8"/><rect x="2.5" y="2" width="4" height="4" rx="0.6" fill="#f0f0f0"/></svg>
<div class="t" style="left:360.0px;top:29.84px;font-size:6.8px;color:#e2e2e2;">Object</div>
<svg class="a" style="left:388.0px;top:32.5px" width="4" height="3" viewBox="0 0 4 3"><path d="M0.4 0.4 L2.0 2.4 L3.6 0.4" fill="none" stroke="#cfcfcf" stroke-width="0.9"/></svg>
<div class="t" style="left:400.0px;top:29.84px;font-size:6.8px;color:#e2e2e2;">View</div>
<div class="t" style="left:422.0px;top:29.84px;font-size:6.8px;color:#e2e2e2;">Select</div>
<div class="t" style="left:447.0px;top:29.84px;font-size:6.8px;color:#e2e2e2;">Add</div>
<div class="t" style="left:465.0px;top:29.84px;font-size:6.8px;color:#e2e2e2;">Node</div>
<div class="a" style="left:488.0px;top:29.5px;width:6.5px;height:6.5px;background:#4772b3;border-radius:1.5px"></div>
<svg class="a" style="left:488.0px;top:29.5px" width="7" height="7" viewBox="0 0 7 7"><path d="M1.3 3.5 L2.8 5 L5.6 1.8" fill="none" stroke="#fff" stroke-width="1"/></svg>
<div class="t" style="left:497.0px;top:29.84px;font-size:6.8px;color:#e2e2e2;">Use Nodes</div>
<div class="a" style="left:543.0px;top:27.5px;width:43.0px;height:11.0px;background:#2c2c2c;border-radius:2px"></div>
<div class="t" style="left:547.0px;top:29.84px;font-size:6.8px;color:#e2e2e2;">Slot 1</div>
<svg class="a" style="left:580.5px;top:32.5px" width="4" height="3" viewBox="0 0 4 3"><path d="M0.4 0.4 L2.0 2.4 L3.6 0.4" fill="none" stroke="#cfcfcf" stroke-width="0.9"/></svg>
<div class="a" style="left:588.5px;top:27.5px;width:17.5px;height:11.0px;background:#2c2c2c;border-radius:2px 0 0 2px"></div>
<svg class="a" style="left:590.0px;top:29.0px" width="15" height="8" viewBox="0 0 15 8"><circle cx="4" cy="4" r="3.5" fill="#f0f0f0"/><path d="M7.5 4 A3.5 3.5 0 0 1 1 5.9 C3 6.3 5.8 5.8 7.5 4Z" fill="#2c2c2c"/><path d="M4 0.5 C3.4 1.8 3.6 3.1 4.5 4 C5.8 3.1 6.7 1.8 6.4 1.4" fill="#2c2c2c"/><path d="M9.5 3 L11 4.5 L12.5 3" fill="none" stroke="#ccc" stroke-width="0.9"/></svg>
<div class="a" style="left:606.5px;top:27.5px;width:68.5px;height:11.0px;background:#282828;"></div>
<div class="t" style="left:609.5px;top:29.84px;font-size:6.8px;color:#e6e6e6;letter-spacing:-0.38px">Combined Shaders.001</div>
<div class="a" style="left:675.0px;top:27.5px;width:35.5px;height:11.0px;background:#3a3a3a;border-radius:0 2px 2px 0"></div>
<svg class="a" style="left:676.0px;top:29.0px" width="34" height="8" viewBox="0 0 34 8"><path d="M3 0.8 L6.5 1.5 L6.5 4.5 C6 6.5 4 7.5 3.8 7.5 C3.5 7.5 1 6.5 1 4.5 L1 1.5Z" fill="none" stroke="#ccc" stroke-width="0.8"/><rect x="13.5" y="2" width="4" height="5" fill="none" stroke="#ddd" stroke-width="0.8"/><rect x="15.5" y="0.8" width="4" height="5" fill="#3a3a3a" stroke="#ddd" stroke-width="0.8"/><path d="M26 1.5 L30 6 M30 1.5 L26 6" stroke="#ddd" stroke-width="0.9"/></svg>
<svg class="a" style="left:714.0px;top:29.0px" width="8" height="8" viewBox="0 0 8 8"><path d="M1 7 L3.5 4.5 M2.5 3 L5 5.5 M3.5 2 L6 1 L7 2 L6 4.5" stroke="#aaa" fill="none" stroke-width="0.9"/></svg>
<svg class="a" style="left:786.0px;top:29.0px" width="9" height="9" viewBox="0 0 9 9"><path d="M4.5 7.5 V2 M2 4 L4.5 1.5 L7 4" fill="none" stroke="#555" stroke-width="1"/><rect x="0.5" y="0.5" width="8" height="8" rx="1.5" fill="none" stroke="#333" stroke-width="0.6"/></svg>
<div class="a" style="left:798.5px;top:27.5px;width:29.0px;height:11.0px;background:#2e2e2e;border-radius:2px"></div>
<div class="a" style="left:799.0px;top:28.0px;width:10.5px;height:10.0px;background:#4a4a4a;border-radius:2px"></div>
<svg class="a" style="left:800.0px;top:29.0px" width="9" height="8" viewBox="0 0 9 8"><path d="M2 6.5 C0 4 2 0.5 5 1 C8 1.5 8 5 6 6.5 M3.5 5.5 C2.5 3.5 4 2.5 5.5 3.5" fill="none" stroke="#999" stroke-width="1"/></svg>
<svg class="a" style="left:810.5px;top:29.0px" width="10" height="8" viewBox="0 0 10 8"><path d="M1 1 V7.5 M1 4.2 H7 M4 1 V7.5 M1 1 H4" stroke="#ddd" stroke-width="1.2" fill="none"/></svg>
<svg class="a" style="left:822.0px;top:32.5px" width="4" height="3" viewBox="0 0 4 3"><path d="M0.4 0.4 L2.0 2.4 L3.6 0.4" fill="none" stroke="#cfcfcf" stroke-width="0.9"/></svg>
<div class="a" style="left:830.0px;top:27.5px;width:26.0px;height:11.0px;background:#2e2e2e;border-radius:2px"></div>
<div class="a" style="left:830.5px;top:28.0px;width:10.5px;height:10.0px;background:#4772b3;border-radius:2px"></div>
<svg class="a" style="left:831.0px;top:29.0px" width="9" height="8" viewBox="0 0 9 8"><circle cx="4.5" cy="4" r="3.3" fill="#fff"/><circle cx="5.5" cy="3.2" r="1.6" fill="#4772b3"/><circle cx="3" cy="5.5" r="1" fill="#4772b3"/></svg>
<svg class="a" style="left:846.0px;top:32.5px" width="4" height="3" viewBox="0 0 4 3"><path d="M0.4 0.4 L2.0 2.4 L3.6 0.4" fill="none" stroke="#cfcfcf" stroke-width="0.9"/></svg>
<svg class="a" style="left:331.0px;top:47.0px" width="9" height="9" viewBox="0 0 9 9"><path d="M0.6 2.8 V1.6 Q0.6 0.6 1.6 0.6 H2.8 M6.2 0.6 H7.4 Q8.4 0.6 8.4 1.6 V2.8 M8.4 6.2 V7.4 Q8.4 8.4 7.4 8.4 H6.2 M2.8 8.4 H1.6 Q0.6 8.4 0.6 7.4 V6.2" fill="none" stroke="#ccc" stroke-width="0.8"/><rect x="2.4" y="2.4" width="4.2" height="4.2" rx="0.6" fill="#f0f0f0"/></svg>
<div class="t" style="left:344.0px;top:48.54px;font-size:6.8px;color:#e0e0e0;">Suzanne</div>
<svg class="a" style="left:375.5px;top:48.5px" width="5" height="6" viewBox="0 0 5 6"><path d="M0.8 0.5 L3.6 3 L0.8 5.5" fill="none" stroke="#bbb" stroke-width="0.9"/></svg>
<svg class="a" style="left:384.0px;top:47.0px" width="9" height="9" viewBox="0 0 9 9"><path d="M1.2 1.5 L7.8 1.5 L4.5 7.8Z" fill="none" stroke="#e0e0e0" stroke-width="1"/><circle cx="1.2" cy="1.5" r="1.1" fill="#e0e0e0"/><circle cx="7.8" cy="1.5" r="1.1" fill="#e0e0e0"/><circle cx="4.5" cy="7.8" r="1.1" fill="#e0e0e0"/></svg>
<div class="t" style="left:396.0px;top:48.54px;font-size:6.8px;color:#e0e0e0;">Suzanne</div>
<svg class="a" style="left:428.5px;top:48.5px" width="5" height="6" viewBox="0 0 5 6"><path d="M0.8 0.5 L3.6 3 L0.8 5.5" fill="none" stroke="#bbb" stroke-width="0.9"/></svg>
<svg class="a" style="left:436.0px;top:47.0px" width="9" height="9" viewBox="0 0 9 9"><circle cx="4.5" cy="4.5" r="3.9" fill="#f0f0f0"/><path d="M8.4 4.5 A3.9 3.9 0 0 1 1.2 6.6 C3.5 7 6.5 6.5 8.4 4.5Z" fill="#1e1e1e"/><path d="M4.5 0.6 C3.8 2 4 3.5 5 4.5 C6.5 3.5 7.5 2 7.2 1.6" fill="#1e1e1e"/></svg>
<div class="t" style="left:448.0px;top:48.54px;font-size:6.8px;color:#e0e0e0;">Combined Shaders.001</div>
<div class="a" style="left:335.8px;top:197.0px;width:414.0px;height:261.5px;background:#818181;border-radius:1px;box-shadow:0.5px 0.8px 0.8px #0a0a0a"></div>
<div class="t" style="left:342.0px;width:400px;text-align:center;top:204.07px;font-size:7px;color:#cfcfcf;">Old School Plastics</div>
<svg class="a" style="left:0;top:0" width="1024" height="580"><defs><linearGradient id="lg1" gradientUnits="userSpaceOnUse" x1="489" y1="0" x2="598" y2="0"><stop offset="0" stop-color="#c8c829"/><stop offset="0.45" stop-color="#c8c829"/><stop offset="0.7" stop-color="#d0d0d0"/><stop offset="1" stop-color="#d0d0d0"/></linearGradient><linearGradient id="lg2" gradientUnits="userSpaceOnUse" x1="0" y1="222" x2="0" y2="325"><stop offset="0" stop-color="#c8c829"/><stop offset="0.5" stop-color="#c8c829"/><stop offset="0.8" stop-color="#cfcfcf"/><stop offset="1" stop-color="#cfcfcf"/></linearGradient></defs><path d="M389.2 333.2 C401.2 333.2 401.2 370.0 413.3 370.0" fill="none" stroke="#1a1a1a" stroke-width="2.0"/><path d="M389.2 333.2 C401.2 333.2 401.2 370.0 413.3 370.0" fill="none" stroke="#c8c8c8" stroke-width="0.8"/><path d="M489.3 318.7 C543.9 318.7 543.9 315.6 598.4 315.6" fill="none" stroke="#1a1a1a" stroke-width="2.3"/><path d="M489.3 318.7 C543.9 318.7 543.9 315.6 598.4 315.6" fill="none" stroke="url(#lg1)" stroke-width="1.1"/><path d="M564.0 254.3 C582.6 254.3 582.6 272.5 601.3 272.5" fill="none" stroke="#1a1a1a" stroke-width="2.0"/><path d="M564.0 254.3 C582.6 254.3 582.6 272.5 601.3 272.5" fill="none" stroke="#c8c8c8" stroke-width="0.8"/><path d="M677.3 221.6 C686.5 221.6 686.5 324.6 695.7 324.6" fill="none" stroke="#1a1a1a" stroke-width="2.3"/><path d="M677.3 221.6 C686.5 221.6 686.5 324.6 695.7 324.6" fill="none" stroke="url(#lg2)" stroke-width="1.1"/><path d="M566.6 322.9 C582.5 322.9 582.5 322.3 598.4 322.3" fill="none" stroke="#1a1a1a" stroke-width="2.3"/><path d="M566.6 322.9 C582.5 322.9 582.5 322.3 598.4 322.3" fill="none" stroke="#63c763" stroke-width="1.1"/><path d="M567.7 369.5 C583.0 369.5 583.0 328.9 598.4 328.9" fill="none" stroke="#1a1a1a" stroke-width="2.3"/><path d="M567.7 369.5 C583.0 369.5 583.0 328.9 598.4 328.9" fill="none" stroke="#63c763" stroke-width="1.1"/><path d="M643.0 307.5 C669.4 307.5 669.4 331.6 695.7 331.6" fill="none" stroke="#1a1a1a" stroke-width="2.3"/><path d="M643.0 307.5 C669.4 307.5 669.4 331.6 695.7 331.6" fill="none" stroke="#63c763" stroke-width="1.1"/><path d="M645.0 422.6 C670.4 422.6 670.4 338.4 695.7 338.4" fill="none" stroke="#1a1a1a" stroke-width="2.3"/><path d="M645.0 422.6 C670.4 422.6 670.4 338.4 695.7 338.4" fill="none" stroke="#63c763" stroke-width="1.1"/><path d="M740.5 317.0 C761.2 317.0 761.2 335.4 782.0 335.4" fill="none" stroke="#1a1a1a" stroke-width="2.3"/><path d="M740.5 317.0 C761.2 317.0 761.2 335.4 782.0 335.4" fill="none" stroke="#63c763" stroke-width="1.1"/><path d="M568.0 437.5 C584.2 437.5 584.2 430.4 600.5 430.4" fill="none" stroke="#1a1a1a" stroke-width="2.3"/><path d="M568.0 437.5 C584.2 437.5 584.2 430.4 600.5 430.4" fill="none" stroke="#c8c829" stroke-width="1.1"/></svg>
<div class="a" style="left:344.8px;top:315.1px;width:44.4px;height:54.3px;background:#2f2f2f;border-radius:2px;box-shadow:0 0.5px 1.2px rgba(0,0,0,0.55);overflow:hidden"><div class="a" style="left:0;top:0;width:100%;height:6.8px;background:#9a521f"></div></div>
<svg class="a" style="left:347.8px;top:317.4px" width="3" height="2" viewBox="0 0 3 2"><path d="M0.2 0.2 L1.4 1.6 L2.6 0.2" fill="none" stroke="#ddd" stroke-width="0.6"/></svg>
<div class="t" style="left:353.6px;top:316.70px;font-size:7.80px;transform:scale(0.5000);transform-origin:left top;color:#e8e8e8;letter-spacing:-0.05px;-webkit-text-stroke:0.1px currentColor">Magic Texture</div>
<div class="t" style="right:638.6px;top:324.80px;font-size:7.80px;transform:scale(0.5000);transform-origin:right top;color:#ececec;letter-spacing:-0.05px;-webkit-text-stroke:0.1px currentColor">Color</div>
<div class="t" style="right:638.6px;top:331.40px;font-size:7.80px;transform:scale(0.5000);transform-origin:right top;color:#ececec;letter-spacing:-0.05px;-webkit-text-stroke:0.1px currentColor">Fac</div>
<div class="a" style="left:348.3px;top:340.0px;width:37.2px;height:5.6px;background:#545454;border-radius:1.5px"></div>
<div class="t" style="left:352.3px;top:341.10px;font-size:7.80px;transform:scale(0.5000);transform-origin:left top;color:#e0e0e0;letter-spacing:-0.05px;-webkit-text-stroke:0.1px currentColor">Depth</div>
<div class="t" style="right:641.5px;top:341.10px;font-size:7.80px;transform:scale(0.5000);transform-origin:right top;color:#e0e0e0;letter-spacing:-0.05px;-webkit-text-stroke:0.1px currentColor">7</div>
<div class="t" style="left:348.6px;top:348.80px;font-size:7.80px;transform:scale(0.5000);transform-origin:left top;color:#ececec;letter-spacing:-0.05px;-webkit-text-stroke:0.1px currentColor">Vector</div>
<div class="a" style="left:348.3px;top:354.8px;width:37.2px;height:5.6px;background:#545454;border-radius:1.5px"></div>
<div class="t" style="left:352.3px;top:355.90px;font-size:7.80px;transform:scale(0.5000);transform-origin:left top;color:#e0e0e0;letter-spacing:-0.05px;-webkit-text-stroke:0.1px currentColor">Scale</div>
<div class="t" style="right:641.5px;top:355.90px;font-size:7.80px;transform:scale(0.5000);transform-origin:right top;color:#e0e0e0;letter-spacing:-0.05px;-webkit-text-stroke:0.1px currentColor">11.900</div>
<div class="a" style="left:348.3px;top:361.6px;width:37.2px;height:5.6px;background:#545454;border-radius:1.5px"></div>
<div class="t" style="left:352.3px;top:362.70px;font-size:7.80px;transform:scale(0.5000);transform-origin:left top;color:#e0e0e0;letter-spacing:-0.05px;-webkit-text-stroke:0.1px currentColor">Distortion</div>
<div class="t" style="right:641.5px;top:362.70px;font-size:7.80px;transform:scale(0.5000);transform-origin:right top;color:#e0e0e0;letter-spacing:-0.05px;-webkit-text-stroke:0.1px currentColor">-0.700</div>
<div class="a" style="left:413.3px;top:308.0px;width:76.0px;height:66.5px;background:#2f2f2f;border-radius:2px;box-shadow:0 0.5px 1.2px rgba(0,0,0,0.55);overflow:hidden"><div class="a" style="left:0;top:0;width:100%;height:6.8px;background:#27689a"></div></div>
<svg class="a" style="left:416.3px;top:310.3px" width="3" height="2" viewBox="0 0 3 2"><path d="M0.2 0.2 L1.4 1.6 L2.6 0.2" fill="none" stroke="#ddd" stroke-width="0.6"/></svg>
<div class="t" style="left:422.1px;top:309.60px;font-size:7.80px;transform:scale(0.5000);transform-origin:left top;color:#e8e8e8;letter-spacing:-0.05px;-webkit-text-stroke:0.1px currentColor">Color Ramp</div>
<div class="t" style="right:538.5px;top:317.20px;font-size:7.80px;transform:scale(0.5000);transform-origin:right top;color:#ececec;letter-spacing:-0.05px;-webkit-text-stroke:0.1px currentColor">Color</div>
<div class="t" style="right:538.5px;top:324.20px;font-size:7.80px;transform:scale(0.5000);transform-origin:right top;color:#ececec;letter-spacing:-0.05px;-webkit-text-stroke:0.1px currentColor">Alpha</div>
<div class="t" style="left:419.3px;top:335.10px;font-size:7.80px;transform:scale(0.5000);transform-origin:left top;color:#aaa;letter-spacing:-0.05px;-webkit-text-stroke:0.1px currentColor">+</div>
<div class="t" style="left:426.3px;top:335.10px;font-size:7.80px;transform:scale(0.5000);transform-origin:left top;color:#aaa;letter-spacing:-0.05px;-webkit-text-stroke:0.1px currentColor">−</div>
<svg class="a" style="left:434.8px;top:335.8px" width="4" height="3" viewBox="0 0 4 3"><path d="M0.3 0.3 L2 2 L3.7 0.3" fill="none" stroke="#aaa" stroke-width="0.6"/></svg>
<div class="a" style="left:447.3px;top:333.8px;width:19.0px;height:6.0px;background:#282828;border-radius:1.5px"></div>
<div class="t" style="left:451.3px;top:335.10px;font-size:7.80px;transform:scale(0.5000);transform-origin:left top;color:#ddd;letter-spacing:-0.05px;-webkit-text-stroke:0.1px currentColor">RGB</div>
<svg class="a" style="left:461.8px;top:336.0px" width="4" height="3" viewBox="0 0 4 3"><path d="M0.3 0.3 L2 2 L3.7 0.3" fill="none" stroke="#aaa" stroke-width="0.6"/></svg>
<div class="a" style="left:466.8px;top:333.8px;width:19.0px;height:6.0px;background:#282828;border-radius:1.5px"></div>
<div class="t" style="left:470.3px;top:335.10px;font-size:7.80px;transform:scale(0.5000);transform-origin:left top;color:#ddd;letter-spacing:-0.05px;-webkit-text-stroke:0.1px currentColor">Linear</div>
<svg class="a" style="left:481.8px;top:336.0px" width="4" height="3" viewBox="0 0 4 3"><path d="M0.3 0.3 L2 2 L3.7 0.3" fill="none" stroke="#aaa" stroke-width="0.6"/></svg>
<div class="a" style="left:419.0px;top:341.4px;width:63.5px;height:6.6px;background:linear-gradient(90deg,#000 0%,#000 38%,#fff 59%,#fff 100%);box-shadow:0 0 0 0.6px #1a1a1a"></div>
<svg class="a" style="left:441.9px;top:344.3px" width="3.2" height="4.8" viewBox="0 0 3.2 4.8"><path d="M1.6 0 V1.5" stroke="#ddd" stroke-width="0.5"/><path d="M0.3 2.2 L1.6 1.1 L2.9 2.2 V4.4 H0.3Z" fill="#222" stroke="#ddd" stroke-width="0.5"/></svg>
<svg class="a" style="left:454.9px;top:344.3px" width="3.2" height="4.8" viewBox="0 0 3.2 4.8"><path d="M1.6 0 V1.5" stroke="#222" stroke-width="0.5"/><path d="M0.3 2.2 L1.6 1.1 L2.9 2.2 V4.4 H0.3Z" fill="#eee" stroke="#222" stroke-width="0.5"/></svg>
<div class="a" style="left:417.3px;top:352.0px;width:19.5px;height:4.8px;background:#545454;border-radius:1.5px"></div>
<div class="t" style="left:226.8px;width:400px;text-align:center;top:352.70px;font-size:7.80px;transform:scale(0.5000);transform-origin:center top;color:#ddd;letter-spacing:-0.05px;-webkit-text-stroke:0.1px currentColor">1</div>
<div class="a" style="left:440.3px;top:352.0px;width:45.0px;height:4.8px;background:#545454;border-radius:1.5px"></div>
<div class="t" style="left:444.3px;top:352.70px;font-size:7.80px;transform:scale(0.5000);transform-origin:left top;color:#e0e0e0;letter-spacing:-0.05px;-webkit-text-stroke:0.1px currentColor">Pos</div>
<div class="t" style="right:541.7px;top:352.70px;font-size:7.80px;transform:scale(0.5000);transform-origin:right top;color:#e0e0e0;letter-spacing:-0.05px;-webkit-text-stroke:0.1px currentColor">0.582</div>
<div class="a" style="left:417.3px;top:359.3px;width:68.0px;height:5.8px;background:#f4f4f4;border-radius:1px"></div>
<div class="t" style="left:417.1px;top:368.20px;font-size:7.80px;transform:scale(0.5000);transform-origin:left top;color:#ececec;letter-spacing:-0.05px;-webkit-text-stroke:0.1px currentColor">Fac</div>
<div class="a" style="left:601.3px;top:210.3px;width:76.0px;height:66.5px;background:#2f2f2f;border-radius:2px;box-shadow:0 0.5px 1.2px rgba(0,0,0,0.55);overflow:hidden"><div class="a" style="left:0;top:0;width:100%;height:6.8px;background:#27689a"></div></div>
<svg class="a" style="left:604.3px;top:212.6px" width="3" height="2" viewBox="0 0 3 2"><path d="M0.2 0.2 L1.4 1.6 L2.6 0.2" fill="none" stroke="#ddd" stroke-width="0.6"/></svg>
<div class="t" style="left:610.1px;top:211.90px;font-size:7.80px;transform:scale(0.5000);transform-origin:left top;color:#e8e8e8;letter-spacing:-0.05px;-webkit-text-stroke:0.1px currentColor">Color Ramp</div>
<div class="t" style="right:350.5px;top:219.50px;font-size:7.80px;transform:scale(0.5000);transform-origin:right top;color:#ececec;letter-spacing:-0.05px;-webkit-text-stroke:0.1px currentColor">Color</div>
<div class="t" style="right:350.5px;top:226.50px;font-size:7.80px;transform:scale(0.5000);transform-origin:right top;color:#ececec;letter-spacing:-0.05px;-webkit-text-stroke:0.1px currentColor">Alpha</div>
<div class="t" style="left:607.3px;top:237.40px;font-size:7.80px;transform:scale(0.5000);transform-origin:left top;color:#aaa;letter-spacing:-0.05px;-webkit-text-stroke:0.1px currentColor">+</div>
<div class="t" style="left:614.3px;top:237.40px;font-size:7.80px;transform:scale(0.5000);transform-origin:left top;color:#aaa;letter-spacing:-0.05px;-webkit-text-stroke:0.1px currentColor">−</div>
<svg class="a" style="left:622.8px;top:238.1px" width="4" height="3" viewBox="0 0 4 3"><path d="M0.3 0.3 L2 2 L3.7 0.3" fill="none" stroke="#aaa" stroke-width="0.6"/></svg>
<div class="a" style="left:635.3px;top:236.1px;width:19.0px;height:6.0px;background:#282828;border-radius:1.5px"></div>
<div class="t" style="left:639.3px;top:237.40px;font-size:7.80px;transform:scale(0.5000);transform-origin:left top;color:#ddd;letter-spacing:-0.05px;-webkit-text-stroke:0.1px currentColor">RGB</div>
<svg class="a" style="left:649.8px;top:238.3px" width="4" height="3" viewBox="0 0 4 3"><path d="M0.3 0.3 L2 2 L3.7 0.3" fill="none" stroke="#aaa" stroke-width="0.6"/></svg>
<div class="a" style="left:654.8px;top:236.1px;width:19.0px;height:6.0px;background:#282828;border-radius:1.5px"></div>
<div class="t" style="left:658.3px;top:237.40px;font-size:7.80px;transform:scale(0.5000);transform-origin:left top;color:#ddd;letter-spacing:-0.05px;-webkit-text-stroke:0.1px currentColor">Linear</div>
<svg class="a" style="left:669.8px;top:238.3px" width="4" height="3" viewBox="0 0 4 3"><path d="M0.3 0.3 L2 2 L3.7 0.3" fill="none" stroke="#aaa" stroke-width="0.6"/></svg>
<div class="a" style="left:607.0px;top:243.7px;width:63.5px;height:6.6px;background:linear-gradient(90deg,#000 0%,#fff 68%,#fff 100%);box-shadow:0 0 0 0.6px #1a1a1a"></div>
<svg class="a" style="left:605.9px;top:246.6px" width="3.2" height="4.8" viewBox="0 0 3.2 4.8"><path d="M1.6 0 V1.5" stroke="#ddd" stroke-width="0.5"/><path d="M0.3 2.2 L1.6 1.1 L2.9 2.2 V4.4 H0.3Z" fill="#222" stroke="#ddd" stroke-width="0.5"/></svg>
<svg class="a" style="left:643.4px;top:246.6px" width="3.2" height="4.8" viewBox="0 0 3.2 4.8"><path d="M1.6 0 V1.5" stroke="#222" stroke-width="0.5"/><path d="M0.3 2.2 L1.6 1.1 L2.9 2.2 V4.4 H0.3Z" fill="#ccc" stroke="#222" stroke-width="0.5"/></svg>
<div class="a" style="left:605.3px;top:254.3px;width:19.5px;height:4.8px;background:#545454;border-radius:1.5px"></div>
<div class="t" style="left:414.8px;width:400px;text-align:center;top:255.00px;font-size:7.80px;transform:scale(0.5000);transform-origin:center top;color:#ddd;letter-spacing:-0.05px;-webkit-text-stroke:0.1px currentColor">1</div>
<div class="a" style="left:628.3px;top:254.3px;width:45.0px;height:4.8px;background:#545454;border-radius:1.5px"></div>
<div class="t" style="left:632.3px;top:255.00px;font-size:7.80px;transform:scale(0.5000);transform-origin:left top;color:#e0e0e0;letter-spacing:-0.05px;-webkit-text-stroke:0.1px currentColor">Pos</div>
<div class="t" style="right:353.7px;top:255.00px;font-size:7.80px;transform:scale(0.5000);transform-origin:right top;color:#e0e0e0;letter-spacing:-0.05px;-webkit-text-stroke:0.1px currentColor">0.591</div>
<div class="a" style="left:605.3px;top:261.6px;width:68.0px;height:5.8px;background:#f4f4f4;border-radius:1px"></div>
<div class="t" style="left:605.1px;top:270.50px;font-size:7.80px;transform:scale(0.5000);transform-origin:left top;color:#ececec;letter-spacing:-0.05px;-webkit-text-stroke:0.1px currentColor">Fac</div>
<div class="a" style="left:519.5px;top:243.4px;width:44.5px;height:30.4px;background:#2f2f2f;border-radius:2px;box-shadow:0 0.5px 1.2px rgba(0,0,0,0.55);overflow:hidden"><div class="a" style="left:0;top:0;width:100%;height:6.8px;background:#a33a55"></div></div>
<svg class="a" style="left:522.5px;top:245.7px" width="3" height="2" viewBox="0 0 3 2"><path d="M0.2 0.2 L1.4 1.6 L2.6 0.2" fill="none" stroke="#ddd" stroke-width="0.6"/></svg>
<div class="t" style="left:528.3px;top:245.00px;font-size:7.80px;transform:scale(0.5000);transform-origin:left top;color:#e8e8e8;letter-spacing:-0.05px;-webkit-text-stroke:0.1px currentColor">Fresnel</div>
<div class="t" style="right:463.8px;top:252.50px;font-size:7.80px;transform:scale(0.5000);transform-origin:right top;color:#ececec;letter-spacing:-0.05px;-webkit-text-stroke:0.1px currentColor">Fac</div>
<div class="a" style="left:523.5px;top:259.5px;width:37.0px;height:5.6px;background:#545454;border-radius:1.5px"></div>
<div class="t" style="left:527.5px;top:260.60px;font-size:7.80px;transform:scale(0.5000);transform-origin:left top;color:#e0e0e0;letter-spacing:-0.05px;-webkit-text-stroke:0.1px currentColor">IOR</div>
<div class="t" style="right:466.5px;top:260.60px;font-size:7.80px;transform:scale(0.5000);transform-origin:right top;color:#e0e0e0;letter-spacing:-0.05px;-webkit-text-stroke:0.1px currentColor">1.450</div>
<div class="t" style="left:523.3px;top:267.20px;font-size:7.80px;transform:scale(0.5000);transform-origin:left top;color:#ececec;letter-spacing:-0.05px;-webkit-text-stroke:0.1px currentColor">Normal</div>
<div class="a" style="left:522.4px;top:311.7px;width:44.2px;height:38.3px;background:#2f2f2f;border-radius:2px;box-shadow:0 0.5px 1.2px rgba(0,0,0,0.55);overflow:hidden"><div class="a" style="left:0;top:0;width:100%;height:6.8px;background:#2e7a2e"></div></div>
<svg class="a" style="left:525.4px;top:314.0px" width="3" height="2" viewBox="0 0 3 2"><path d="M0.2 0.2 L1.4 1.6 L2.6 0.2" fill="none" stroke="#ddd" stroke-width="0.6"/></svg>
<div class="t" style="left:531.2px;top:313.30px;font-size:7.80px;transform:scale(0.5000);transform-origin:left top;color:#e8e8e8;letter-spacing:-0.05px;-webkit-text-stroke:0.1px currentColor">Velvet BSDF</div>
<div class="t" style="right:461.2px;top:321.10px;font-size:7.80px;transform:scale(0.5000);transform-origin:right top;color:#ececec;letter-spacing:-0.05px;-webkit-text-stroke:0.1px currentColor">BSDF</div>
<div class="t" style="left:526.2px;top:328.70px;font-size:7.80px;transform:scale(0.5000);transform-origin:left top;color:#ececec;letter-spacing:-0.05px;-webkit-text-stroke:0.1px currentColor">Color</div>
<div class="a" style="left:542.5px;top:328.0px;width:21.5px;height:5.5px;background:#1f4de0;border-radius:1px"></div>
<div class="a" style="left:526.0px;top:335.0px;width:38.0px;height:5.6px;background:#4772b3;border-radius:1.5px"></div>
<div class="t" style="left:536.0px;top:336.10px;font-size:7.80px;transform:scale(0.5000);transform-origin:left top;color:#f0f0f0;letter-spacing:-0.05px;-webkit-text-stroke:0.1px currentColor">Sigma</div>
<div class="t" style="right:463.0px;top:336.10px;font-size:7.80px;transform:scale(0.5000);transform-origin:right top;color:#f0f0f0;letter-spacing:-0.05px;-webkit-text-stroke:0.1px currentColor">1.000</div>
<div class="t" style="left:526.2px;top:342.80px;font-size:7.80px;transform:scale(0.5000);transform-origin:left top;color:#ececec;letter-spacing:-0.05px;-webkit-text-stroke:0.1px currentColor">Normal</div>
<div class="a" style="left:519.9px;top:358.5px;width:47.8px;height:54.5px;background:#2f2f2f;border-radius:2px;box-shadow:0 0.5px 1.2px rgba(0,0,0,0.55);overflow:hidden"><div class="a" style="left:0;top:0;width:100%;height:6.8px;background:#2e7a2e"></div></div>
<svg class="a" style="left:522.9px;top:360.8px" width="3" height="2" viewBox="0 0 3 2"><path d="M0.2 0.2 L1.4 1.6 L2.6 0.2" fill="none" stroke="#ddd" stroke-width="0.6"/></svg>
<div class="t" style="left:528.7px;top:360.10px;font-size:7.80px;transform:scale(0.5000);transform-origin:left top;color:#e8e8e8;letter-spacing:-0.05px;-webkit-text-stroke:0.1px currentColor">Refraction BSDF</div>
<div class="t" style="right:460.1px;top:367.70px;font-size:7.80px;transform:scale(0.5000);transform-origin:right top;color:#ececec;letter-spacing:-0.05px;-webkit-text-stroke:0.1px currentColor">BSDF</div>
<div class="a" style="left:523.5px;top:377.0px;width:40.5px;height:5.8px;background:#282828;border-radius:1.5px"></div>
<div class="t" style="left:526.0px;top:378.10px;font-size:7.80px;transform:scale(0.5000);transform-origin:left top;color:#ddd;letter-spacing:-0.05px;-webkit-text-stroke:0.1px currentColor">Beckmann</div>
<svg class="a" style="left:559.5px;top:378.8px" width="4" height="3" viewBox="0 0 4 3"><path d="M0.3 0.3 L2 2 L3.7 0.3" fill="none" stroke="#aaa" stroke-width="0.6"/></svg>
<div class="t" style="left:523.7px;top:385.40px;font-size:7.80px;transform:scale(0.5000);transform-origin:left top;color:#ececec;letter-spacing:-0.05px;-webkit-text-stroke:0.1px currentColor">Color</div>
<div class="a" style="left:541.3px;top:385.0px;width:23.0px;height:5.3px;background:#cfe6f6;border-radius:1px"></div>
<div class="a" style="left:523.5px;top:391.5px;width:40.5px;height:5.6px;background:#545454;border-radius:1.5px"></div>
<div class="t" style="left:529.5px;top:392.60px;font-size:7.80px;transform:scale(0.5000);transform-origin:left top;color:#e0e0e0;letter-spacing:-0.15px;-webkit-text-stroke:0.1px currentColor">Roughness</div>
<div class="t" style="right:463.0px;top:392.60px;font-size:7.80px;transform:scale(0.5000);transform-origin:right top;color:#e0e0e0;letter-spacing:-0.05px;-webkit-text-stroke:0.1px currentColor">0.000</div>
<div class="a" style="left:523.5px;top:398.5px;width:40.5px;height:5.6px;background:#545454;border-radius:1.5px"></div>
<div class="t" style="left:537.0px;top:399.60px;font-size:7.80px;transform:scale(0.5000);transform-origin:left top;color:#e0e0e0;letter-spacing:-0.05px;-webkit-text-stroke:0.1px currentColor">IOR</div>
<div class="t" style="right:463.0px;top:399.60px;font-size:7.80px;transform:scale(0.5000);transform-origin:right top;color:#e0e0e0;letter-spacing:-0.05px;-webkit-text-stroke:0.1px currentColor">1.450</div>
<div class="t" style="left:523.7px;top:406.40px;font-size:7.80px;transform:scale(0.5000);transform-origin:left top;color:#ececec;letter-spacing:-0.05px;-webkit-text-stroke:0.1px currentColor">Normal</div>
<div class="a" style="left:520.4px;top:426.4px;width:47.6px;height:23.4px;background:#2f2f2f;border-radius:2px;box-shadow:0 0.5px 1.2px rgba(0,0,0,0.55);overflow:hidden"><div class="a" style="left:0;top:0;width:100%;height:6.8px;background:#27689a"></div></div>
<svg class="a" style="left:523.4px;top:428.7px" width="3" height="2" viewBox="0 0 3 2"><path d="M0.2 0.2 L1.4 1.6 L2.6 0.2" fill="none" stroke="#ddd" stroke-width="0.6"/></svg>
<div class="t" style="left:529.2px;top:428.00px;font-size:7.80px;transform:scale(0.5000);transform-origin:left top;color:#e8e8e8;letter-spacing:-0.05px;-webkit-text-stroke:0.1px currentColor">Blackbody</div>
<div class="t" style="right:459.8px;top:435.70px;font-size:7.80px;transform:scale(0.5000);transform-origin:right top;color:#ececec;letter-spacing:-0.05px;-webkit-text-stroke:0.1px currentColor">Color</div>
<div class="a" style="left:524.0px;top:441.5px;width:40.0px;height:5.6px;background:#545454;border-radius:1.5px"></div>
<div class="t" style="left:529.0px;top:442.60px;font-size:7.80px;transform:scale(0.5000);transform-origin:left top;color:#e0e0e0;letter-spacing:-0.05px;-webkit-text-stroke:0.1px currentColor">Temper</div>
<div class="t" style="right:463.0px;top:442.60px;font-size:7.80px;transform:scale(0.5000);transform-origin:right top;color:#e0e0e0;letter-spacing:-0.05px;-webkit-text-stroke:0.1px currentColor">1300.000</div>
<div class="a" style="left:598.4px;top:296.2px;width:44.6px;height:38.3px;background:#2f2f2f;border-radius:2px;box-shadow:0 0.5px 1.2px rgba(0,0,0,0.55);overflow:hidden"><div class="a" style="left:0;top:0;width:100%;height:6.8px;background:#2e7a2e"></div></div>
<svg class="a" style="left:601.4px;top:298.5px" width="3" height="2" viewBox="0 0 3 2"><path d="M0.2 0.2 L1.4 1.6 L2.6 0.2" fill="none" stroke="#ddd" stroke-width="0.6"/></svg>
<div class="t" style="left:607.2px;top:297.80px;font-size:7.80px;transform:scale(0.5000);transform-origin:left top;color:#e8e8e8;letter-spacing:-0.05px;-webkit-text-stroke:0.1px currentColor">Mix Shader</div>
<div class="t" style="right:384.8px;top:305.70px;font-size:7.80px;transform:scale(0.5000);transform-origin:right top;color:#ececec;letter-spacing:-0.05px;-webkit-text-stroke:0.1px currentColor">Shader</div>
<div class="t" style="left:602.2px;top:313.80px;font-size:7.80px;transform:scale(0.5000);transform-origin:left top;color:#ececec;letter-spacing:-0.05px;-webkit-text-stroke:0.1px currentColor">Fac</div>
<div class="t" style="left:602.2px;top:320.50px;font-size:7.80px;transform:scale(0.5000);transform-origin:left top;color:#ececec;letter-spacing:-0.05px;-webkit-text-stroke:0.1px currentColor">Shader</div>
<div class="t" style="left:602.2px;top:327.10px;font-size:7.80px;transform:scale(0.5000);transform-origin:left top;color:#ececec;letter-spacing:-0.05px;-webkit-text-stroke:0.1px currentColor">Shader</div>
<div class="a" style="left:600.5px;top:411.6px;width:44.5px;height:31.4px;background:#2f2f2f;border-radius:2px;box-shadow:0 0.5px 1.2px rgba(0,0,0,0.55);overflow:hidden"><div class="a" style="left:0;top:0;width:100%;height:6.8px;background:#2e7a2e"></div></div>
<svg class="a" style="left:603.5px;top:413.9px" width="3" height="2" viewBox="0 0 3 2"><path d="M0.2 0.2 L1.4 1.6 L2.6 0.2" fill="none" stroke="#ddd" stroke-width="0.6"/></svg>
<div class="t" style="left:609.3px;top:413.20px;font-size:7.80px;transform:scale(0.5000);transform-origin:left top;color:#e8e8e8;letter-spacing:-0.05px;-webkit-text-stroke:0.1px currentColor">Emission</div>
<div class="t" style="right:382.8px;top:420.80px;font-size:7.80px;transform:scale(0.5000);transform-origin:right top;color:#ececec;letter-spacing:-0.05px;-webkit-text-stroke:0.1px currentColor">Emission</div>
<div class="t" style="left:604.3px;top:428.60px;font-size:7.80px;transform:scale(0.5000);transform-origin:left top;color:#ececec;letter-spacing:-0.05px;-webkit-text-stroke:0.1px currentColor">Color</div>
<div class="a" style="left:604.0px;top:434.0px;width:38.0px;height:5.6px;background:#545454;border-radius:1.5px"></div>
<div class="t" style="left:609.0px;top:435.10px;font-size:7.80px;transform:scale(0.5000);transform-origin:left top;color:#e0e0e0;letter-spacing:-0.05px;-webkit-text-stroke:0.1px currentColor">Strength</div>
<div class="t" style="right:384.5px;top:435.10px;font-size:7.80px;transform:scale(0.5000);transform-origin:right top;color:#e0e0e0;letter-spacing:-0.05px;-webkit-text-stroke:0.1px currentColor">0.500</div>
<div class="a" style="left:695.7px;top:306.0px;width:44.8px;height:37.0px;background:#2f2f2f;border-radius:2px;box-shadow:0 0.5px 1.2px rgba(0,0,0,0.55);overflow:hidden"><div class="a" style="left:0;top:0;width:100%;height:6.8px;background:#2e7a2e"></div></div>
<svg class="a" style="left:698.7px;top:308.3px" width="3" height="2" viewBox="0 0 3 2"><path d="M0.2 0.2 L1.4 1.6 L2.6 0.2" fill="none" stroke="#ddd" stroke-width="0.6"/></svg>
<div class="t" style="left:704.5px;top:307.60px;font-size:7.80px;transform:scale(0.5000);transform-origin:left top;color:#e8e8e8;letter-spacing:-0.05px;-webkit-text-stroke:0.1px currentColor">Mix Shader</div>
<div class="t" style="right:287.3px;top:315.20px;font-size:7.80px;transform:scale(0.5000);transform-origin:right top;color:#ececec;letter-spacing:-0.05px;-webkit-text-stroke:0.1px currentColor">Shader</div>
<div class="t" style="left:699.5px;top:322.80px;font-size:7.80px;transform:scale(0.5000);transform-origin:left top;color:#ececec;letter-spacing:-0.05px;-webkit-text-stroke:0.1px currentColor">Fac</div>
<div class="t" style="left:699.5px;top:329.80px;font-size:7.80px;transform:scale(0.5000);transform-origin:left top;color:#ececec;letter-spacing:-0.05px;-webkit-text-stroke:0.1px currentColor">Shader</div>
<div class="t" style="left:699.5px;top:336.60px;font-size:7.80px;transform:scale(0.5000);transform-origin:left top;color:#ececec;letter-spacing:-0.05px;-webkit-text-stroke:0.1px currentColor">Shader</div>
<div class="a" style="left:782.0px;top:317.0px;width:43.0px;height:37.5px;background:#2f2f2f;border-radius:2px;box-shadow:0 0.5px 1.2px rgba(0,0,0,0.55);overflow:hidden"><div class="a" style="left:0;top:0;width:100%;height:6.8px;background:#4d1d28"></div></div>
<svg class="a" style="left:785.0px;top:319.3px" width="3" height="2" viewBox="0 0 3 2"><path d="M0.2 0.2 L1.4 1.6 L2.6 0.2" fill="none" stroke="#ddd" stroke-width="0.6"/></svg>
<div class="t" style="left:790.8px;top:318.60px;font-size:7.80px;transform:scale(0.5000);transform-origin:left top;color:#e8e8e8;letter-spacing:-0.05px;-webkit-text-stroke:0.1px currentColor">Material Output</div>
<div class="a" style="left:785.5px;top:326.0px;width:36.0px;height:5.6px;background:#282828;border-radius:1.5px"></div>
<div class="t" style="left:789.0px;top:327.10px;font-size:7.80px;transform:scale(0.5000);transform-origin:left top;color:#ddd;letter-spacing:-0.05px;-webkit-text-stroke:0.1px currentColor">All</div>
<svg class="a" style="left:817.0px;top:328.0px" width="4" height="3" viewBox="0 0 4 3"><path d="M0.3 0.3 L2 2 L3.7 0.3" fill="none" stroke="#aaa" stroke-width="0.6"/></svg>
<div class="t" style="left:785.8px;top:333.60px;font-size:7.80px;transform:scale(0.5000);transform-origin:left top;color:#ececec;letter-spacing:-0.05px;-webkit-text-stroke:0.1px currentColor">Surface</div>
<div class="t" style="left:785.8px;top:340.60px;font-size:7.80px;transform:scale(0.5000);transform-origin:left top;color:#ececec;letter-spacing:-0.05px;-webkit-text-stroke:0.1px currentColor">Volume</div>
<div class="t" style="left:785.8px;top:347.70px;font-size:7.80px;transform:scale(0.5000);transform-origin:left top;color:#ececec;letter-spacing:-0.05px;-webkit-text-stroke:0.1px currentColor">Displacement</div>
<svg class="a" style="left:0;top:0" width="1024" height="580"><circle cx="389.2" cy="326.6" r="1.55" fill="#c7c729" stroke="#1a1a1a" stroke-width="0.5"/><circle cx="389.2" cy="333.2" r="1.55" fill="#a1a1a1" stroke="#1a1a1a" stroke-width="0.5"/><circle cx="344.8" cy="350.6" r="1.55" fill="#6363c7" stroke="#1a1a1a" stroke-width="0.5"/><circle cx="344.8" cy="357.6" r="1.55" fill="#a1a1a1" stroke="#1a1a1a" stroke-width="0.5"/><circle cx="344.8" cy="364.4" r="1.55" fill="#a1a1a1" stroke="#1a1a1a" stroke-width="0.5"/><circle cx="489.3" cy="319.0" r="1.55" fill="#c7c729" stroke="#1a1a1a" stroke-width="0.5"/><circle cx="489.3" cy="326.0" r="1.55" fill="#a1a1a1" stroke="#1a1a1a" stroke-width="0.5"/><circle cx="413.3" cy="370.0" r="1.55" fill="#a1a1a1" stroke="#1a1a1a" stroke-width="0.5"/><circle cx="677.3" cy="221.3" r="1.55" fill="#c7c729" stroke="#1a1a1a" stroke-width="0.5"/><circle cx="677.3" cy="228.3" r="1.55" fill="#a1a1a1" stroke="#1a1a1a" stroke-width="0.5"/><circle cx="601.3" cy="272.3" r="1.55" fill="#a1a1a1" stroke="#1a1a1a" stroke-width="0.5"/><circle cx="564.0" cy="254.3" r="1.55" fill="#a1a1a1" stroke="#1a1a1a" stroke-width="0.5"/><circle cx="519.5" cy="262.3" r="1.55" fill="#a1a1a1" stroke="#1a1a1a" stroke-width="0.5"/><circle cx="519.5" cy="269.0" r="1.55" fill="#6363c7" stroke="#1a1a1a" stroke-width="0.5"/><circle cx="566.6" cy="322.9" r="1.55" fill="#63c763" stroke="#1a1a1a" stroke-width="0.5"/><circle cx="522.4" cy="330.5" r="1.55" fill="#c7c729" stroke="#1a1a1a" stroke-width="0.5"/><circle cx="522.4" cy="337.8" r="1.55" fill="#a1a1a1" stroke="#1a1a1a" stroke-width="0.5"/><circle cx="522.4" cy="344.6" r="1.55" fill="#6363c7" stroke="#1a1a1a" stroke-width="0.5"/><circle cx="567.7" cy="369.5" r="1.55" fill="#63c763" stroke="#1a1a1a" stroke-width="0.5"/><circle cx="519.9" cy="387.2" r="1.55" fill="#c7c729" stroke="#1a1a1a" stroke-width="0.5"/><circle cx="519.9" cy="394.3" r="1.55" fill="#a1a1a1" stroke="#1a1a1a" stroke-width="0.5"/><circle cx="519.9" cy="401.3" r="1.55" fill="#a1a1a1" stroke="#1a1a1a" stroke-width="0.5"/><circle cx="519.9" cy="408.2" r="1.55" fill="#6363c7" stroke="#1a1a1a" stroke-width="0.5"/><circle cx="568.0" cy="437.5" r="1.55" fill="#c7c729" stroke="#1a1a1a" stroke-width="0.5"/><circle cx="520.4" cy="444.3" r="1.55" fill="#a1a1a1" stroke="#1a1a1a" stroke-width="0.5"/><circle cx="643.0" cy="307.5" r="1.55" fill="#63c763" stroke="#1a1a1a" stroke-width="0.5"/><circle cx="598.4" cy="315.6" r="1.55" fill="#a1a1a1" stroke="#1a1a1a" stroke-width="0.5"/><circle cx="598.4" cy="322.3" r="1.55" fill="#63c763" stroke="#1a1a1a" stroke-width="0.5"/><circle cx="598.4" cy="328.9" r="1.55" fill="#63c763" stroke="#1a1a1a" stroke-width="0.5"/><circle cx="645.0" cy="422.6" r="1.55" fill="#63c763" stroke="#1a1a1a" stroke-width="0.5"/><circle cx="600.5" cy="430.4" r="1.55" fill="#c7c729" stroke="#1a1a1a" stroke-width="0.5"/><circle cx="600.5" cy="436.8" r="1.55" fill="#a1a1a1" stroke="#1a1a1a" stroke-width="0.5"/><circle cx="740.5" cy="317.0" r="1.55" fill="#63c763" stroke="#1a1a1a" stroke-width="0.5"/><circle cx="695.7" cy="324.6" r="1.55" fill="#a1a1a1" stroke="#1a1a1a" stroke-width="0.5"/><circle cx="695.7" cy="331.6" r="1.55" fill="#63c763" stroke="#1a1a1a" stroke-width="0.5"/><circle cx="695.7" cy="338.4" r="1.55" fill="#63c763" stroke="#1a1a1a" stroke-width="0.5"/><circle cx="782.0" cy="335.4" r="1.55" fill="#63c763" stroke="#1a1a1a" stroke-width="0.5"/><circle cx="782.0" cy="342.4" r="1.55" fill="#63c763" stroke="#1a1a1a" stroke-width="0.5"/><circle cx="782.0" cy="349.5" r="1.55" fill="#6363c7" stroke="#1a1a1a" stroke-width="0.5"/></svg>
<svg class="a" style="left:315.5px;top:48.5px" width="8" height="6" viewBox="0 0 8 6"><path d="M2.5 0.5 L0.5 3 L2.5 5.5 M5.5 0.5 L7.5 3 L5.5 5.5" fill="none" stroke="#9a9a9a" stroke-width="0.8"/></svg>
<div class="a" style="left:326.0px;top:569.8px;width:527.0px;height:0.9px;background:#2e2e2e;"></div>
<div class="a" style="left:858.0px;top:26.0px;width:166.0px;height:182.0px;background:#282828;"></div>
<div class="a" style="left:858.0px;top:207.5px;width:166.0px;height:2.0px;background:#161616;"></div>
<div class="a" style="left:858.0px;top:26.0px;width:166.0px;height:13.0px;background:#282828;"></div>
<div class="a" style="left:863.5px;top:27.8px;width:14.0px;height:9.6px;background:#2c2c2c;border-radius:2px"></div>
<svg class="a" style="left:864.5px;top:29.0px" width="13" height="8" viewBox="0 0 13 8"><path d="M1 1 H4 M2 1 V7 M2 4 H4 M2 7 H4" stroke="#ddd" stroke-width="0.9" fill="none"/><path d="M5 1 H7.5 M5 4 H7.5 M5 7 H7.5" stroke="#ddd" stroke-width="1.1"/><path d="M9 3 L10.3 4.3 L11.6 3" fill="none" stroke="#ccc" stroke-width="0.8"/></svg>
<div class="a" style="left:883.0px;top:27.8px;width:15.0px;height:9.6px;background:#2c2c2c;border-radius:2px"></div>
<svg class="a" style="left:884.0px;top:29.0px" width="13" height="8" viewBox="0 0 13 8"><path d="M1 2 L5 0.8 L6.5 3.5 L6.5 6.5 L1 6.5 Z" fill="none" stroke="#ccc" stroke-width="0.9"/><path d="M2.5 6 L4 3 L5.5 6Z" fill="#ccc"/><path d="M9.5 3 L10.8 4.3 L12.1 3" fill="none" stroke="#ccc" stroke-width="0.8"/></svg>
<div class="a" style="left:908.0px;top:27.8px;width:59.5px;height:9.6px;background:#1d1d1d;border-radius:2px"></div>
<svg class="a" style="left:911.0px;top:29.0px" width="8" height="8" viewBox="0 0 8 8"><circle cx="4.8" cy="3" r="2.3" fill="none" stroke="#ddd" stroke-width="0.9"/><path d="M3.2 4.6 L0.8 7.2" stroke="#ddd" stroke-width="1.1"/></svg>
<div class="a" style="left:991.5px;top:27.8px;width:17.0px;height:9.6px;background:#2c2c2c;border-radius:2px"></div>
<svg class="a" style="left:992.5px;top:29.0px" width="15" height="8" viewBox="0 0 15 8"><path d="M0.8 0.8 H7.2 L4.8 3.8 V7.2 L3.2 6.2 V3.8Z" fill="none" stroke="#ddd" stroke-width="0.9"/><path d="M9.5 3 L10.8 4.3 L12.1 3" fill="none" stroke="#ccc" stroke-width="0.8"/></svg>
<div class="a" style="left:1012.0px;top:27.8px;width:10.0px;height:9.6px;background:#4a4a4a;border-radius:2px"></div>
<svg class="a" style="left:1013.0px;top:29.0px" width="9" height="8" viewBox="0 0 9 8"><rect x="1" y="2" width="5.5" height="5.5" fill="none" stroke="#bbb" stroke-width="0.8"/><path d="M6 0 V3 M4.5 1.5 H7.5" stroke="#fff" stroke-width="0.8"/></svg>
<div class="a" style="left:858.0px;top:51.7px;width:166.0px;height:10.8px;background:#2b2b2b;"></div>
<div class="a" style="left:858.0px;top:73.3px;width:166.0px;height:10.8px;background:#2b2b2b;"></div>
<div class="a" style="left:858.0px;top:94.9px;width:166.0px;height:10.8px;background:#2b2b2b;"></div>
<div class="a" style="left:858.0px;top:116.5px;width:166.0px;height:10.8px;background:#2b2b2b;"></div>
<div class="a" style="left:858.0px;top:138.1px;width:166.0px;height:10.8px;background:#2b2b2b;"></div>
<div class="a" style="left:858.0px;top:159.7px;width:166.0px;height:10.8px;background:#2b2b2b;"></div>
<div class="a" style="left:858.0px;top:181.3px;width:166.0px;height:10.8px;background:#2b2b2b;"></div>
<div class="a" style="left:858.0px;top:127.3px;width:166.0px;height:10.8px;background:#3a5794;"></div>
<svg class="a" style="left:869.0px;top:42.3px" width="8" height="8" viewBox="0 0 8 8"><rect x="0.5" y="0.5" width="7" height="2" fill="#ddd"/><rect x="0.8" y="3" width="6.4" height="4.2" fill="none" stroke="#ddd" stroke-width="0.9"/><rect x="2.8" y="4.2" width="2.4" height="1" fill="#ddd"/></svg>
<div class="t" style="left:881.0px;top:43.64px;font-size:6.8px;color:#dcdcdc;">Scene Collection</div>
<svg class="a" style="left:870.5px;top:55.5px" width="5" height="4" viewBox="0 0 5 4"><path d="M0 0 H4.5 L2.25 3Z" fill="#ccc"/></svg>
<svg class="a" style="left:880.5px;top:53.1px" width="8" height="8" viewBox="0 0 8 8"><rect x="-1.5" y="-1.5" width="11" height="10" rx="1.5" fill="#424242"/><rect x="0.5" y="0.5" width="7" height="2" fill="#ddd"/><rect x="0.8" y="3" width="6.4" height="4.2" fill="none" stroke="#ddd" stroke-width="0.9"/><rect x="2.8" y="4.2" width="2.4" height="1" fill="#ddd"/></svg>
<div class="t" style="left:892.0px;top:54.44px;font-size:6.8px;color:#dcdcdc;">Collection</div>
<svg class="a" style="left:991.5px;top:53.8px" width="7" height="7" viewBox="0 0 7 7"><rect x="0" y="0" width="6.5" height="6.5" rx="1" fill="#e6e6e6"/><path d="M1.2 3.2 L2.7 4.7 L5.3 1.8" fill="none" stroke="#222" stroke-width="1"/></svg>
<svg class="a" style="left:1000.5px;top:53.6px" width="9" height="7" viewBox="0 0 9 7"><path d="M0.3 3.5 C2.5 0 6.5 0 8.7 3.5 C6.5 7 2.5 7 0.3 3.5Z" fill="#e6e6e6"/><circle cx="4.5" cy="3.5" r="1.9" fill="#282828"/><circle cx="4.5" cy="3.5" r="0.8" fill="#e6e6e6"/></svg>
<svg class="a" style="left:1010.5px;top:53.6px" width="9" height="7" viewBox="0 0 9 7"><rect x="0.3" y="1.3" width="8.4" height="5.6" rx="1" fill="#e6e6e6"/><rect x="2.8" y="0.2" width="3.4" height="1.6" fill="#e6e6e6"/><circle cx="4.5" cy="4.1" r="1.9" fill="#282828"/><circle cx="4.5" cy="4.1" r="1" fill="#e6e6e6"/></svg>
<svg class="a" style="left:991.5px;top:118.6px" width="7" height="7" viewBox="0 0 7 7"><rect x="0" y="0" width="6.5" height="6.5" rx="1" fill="#e6e6e6"/><path d="M1.2 3.2 L2.7 4.7 L5.3 1.8" fill="none" stroke="#222" stroke-width="1"/></svg>
<svg class="a" style="left:1000.5px;top:118.4px" width="9" height="7" viewBox="0 0 9 7"><path d="M0.3 3.5 C2.5 0 6.5 0 8.7 3.5 C6.5 7 2.5 7 0.3 3.5Z" fill="#e6e6e6"/><circle cx="4.5" cy="3.5" r="1.9" fill="#282828"/><circle cx="4.5" cy="3.5" r="0.8" fill="#e6e6e6"/></svg>
<svg class="a" style="left:1010.5px;top:118.4px" width="9" height="7" viewBox="0 0 9 7"><rect x="0.3" y="1.3" width="8.4" height="5.6" rx="1" fill="#e6e6e6"/><rect x="2.8" y="0.2" width="3.4" height="1.6" fill="#e6e6e6"/><circle cx="4.5" cy="4.1" r="1.9" fill="#282828"/><circle cx="4.5" cy="4.1" r="1" fill="#e6e6e6"/></svg>
<div class="a" style="left:879.5px;top:62.5px;width:0.8px;height:52.0px;background:#3d3d3d;"></div>
<svg class="a" style="left:882.5px;top:65.7px" width="4" height="5" viewBox="0 0 4 5"><path d="M0 0 V4.4 L3.3 2.2Z" fill="#cfcfcf"/></svg>
<div class="t" style="left:902.0px;top:65.54px;font-size:6.8px;color:#dcdcdc;">Camera</div>
<svg class="a" style="left:889.0px;top:63.9px" width="10" height="8" viewBox="0 0 10 8"><circle cx="3" cy="2.2" r="1.9" fill="none" stroke="#e88a2a" stroke-width="1.1"/><circle cx="6.6" cy="2.2" r="1.5" fill="none" stroke="#e88a2a" stroke-width="1.1"/><rect x="1" y="4.2" width="6.5" height="3.3" fill="#e88a2a"/><path d="M7.5 5.9 L9.5 4.5 V7.3Z" fill="#e88a2a"/></svg>
<div class="a" style="left:934.5px;top:62.6px;width:12.0px;height:10.5px;background:#424242;border-radius:2px"></div>
<svg class="a" style="left:935.5px;top:63.9px" width="10" height="8" viewBox="0 0 10 8"><path d="M1 2.5 C1 1 3 1 4 2 H7 C9 2 9 4 7 4 H3 C1 4 1 6 3 6 H6 C8 6 9 7 8.5 7.5" fill="none" stroke="#3db8a0" stroke-width="1.1"/></svg>
<svg class="a" style="left:1000.5px;top:64.4px" width="9" height="7" viewBox="0 0 9 7"><path d="M0.3 3.5 C2.5 0 6.5 0 8.7 3.5 C6.5 7 2.5 7 0.3 3.5Z" fill="#e6e6e6"/><circle cx="4.5" cy="3.5" r="1.9" fill="#282828"/><circle cx="4.5" cy="3.5" r="0.8" fill="#e6e6e6"/></svg>
<svg class="a" style="left:1010.5px;top:64.4px" width="9" height="7" viewBox="0 0 9 7"><rect x="0.3" y="1.3" width="8.4" height="5.6" rx="1" fill="#e6e6e6"/><rect x="2.8" y="0.2" width="3.4" height="1.6" fill="#e6e6e6"/><circle cx="4.5" cy="4.1" r="1.9" fill="#282828"/><circle cx="4.5" cy="4.1" r="1" fill="#e6e6e6"/></svg>
<svg class="a" style="left:882.5px;top:76.5px" width="4" height="5" viewBox="0 0 4 5"><path d="M0 0 V4.4 L3.3 2.2Z" fill="#cfcfcf"/></svg>
<div class="t" style="left:902.0px;top:76.34px;font-size:6.8px;color:#7a7a7a;">Cube</div>
<svg class="a" style="left:890.5px;top:74.2px" width="9" height="9" viewBox="0 0 9 9"><path d="M1.2 1.5 H7.8 L4.5 7.8Z" fill="none" stroke="#8a5a30" stroke-width="1.1" stroke-linejoin="round"/><circle cx="1.2" cy="1.5" r="1.1" fill="#8a5a30"/><circle cx="7.8" cy="1.5" r="1.1" fill="#8a5a30"/><circle cx="4.5" cy="7.8" r="1.1" fill="#8a5a30"/></svg>
<svg class="a" style="left:929.0px;top:74.2px" width="9" height="9" viewBox="0 0 9 9"><path d="M1.2 1.5 H7.8 L4.5 7.8Z" fill="none" stroke="#2a8070" stroke-width="1.1" stroke-linejoin="round"/><circle cx="1.2" cy="1.5" r="1.1" fill="#2a8070"/><circle cx="7.8" cy="1.5" r="1.1" fill="#2a8070"/><circle cx="4.5" cy="7.8" r="1.1" fill="#2a8070"/></svg>
<svg class="a" style="left:1000.5px;top:76.2px" width="9" height="6" viewBox="0 0 9 6"><path d="M0.8 1.5 C2.5 4 6.5 4 8.2 1.5" fill="none" stroke="#888" stroke-width="0.9"/></svg>
<svg class="a" style="left:1010.5px;top:75.2px" width="9" height="7" viewBox="0 0 9 7"><rect x="0.3" y="1.3" width="8.4" height="5.6" rx="1" fill="#888"/><rect x="2.8" y="0.2" width="3.4" height="1.6" fill="#888"/><circle cx="4.5" cy="4.1" r="1.9" fill="#282828"/><circle cx="4.5" cy="4.1" r="1" fill="#888"/></svg>
<svg class="a" style="left:882.5px;top:87.3px" width="4" height="5" viewBox="0 0 4 5"><path d="M0 0 V4.4 L3.3 2.2Z" fill="#cfcfcf"/></svg>
<div class="t" style="left:902.0px;top:87.14px;font-size:6.8px;color:#dcdcdc;">Cube.001</div>
<svg class="a" style="left:890.5px;top:85.0px" width="9" height="9" viewBox="0 0 9 9"><path d="M1.2 1.5 H7.8 L4.5 7.8Z" fill="none" stroke="#e88a2a" stroke-width="1.1" stroke-linejoin="round"/><circle cx="1.2" cy="1.5" r="1.1" fill="#e88a2a"/><circle cx="7.8" cy="1.5" r="1.1" fill="#e88a2a"/><circle cx="4.5" cy="7.8" r="1.1" fill="#e88a2a"/></svg>
<svg class="a" style="left:937.0px;top:85.0px" width="9" height="9" viewBox="0 0 9 9"><path d="M1.2 1.5 H7.8 L4.5 7.8Z" fill="none" stroke="#3db8a0" stroke-width="1.1" stroke-linejoin="round"/><circle cx="1.2" cy="1.5" r="1.1" fill="#3db8a0"/><circle cx="7.8" cy="1.5" r="1.1" fill="#3db8a0"/><circle cx="4.5" cy="7.8" r="1.1" fill="#3db8a0"/></svg>
<svg class="a" style="left:1000.5px;top:86.0px" width="9" height="7" viewBox="0 0 9 7"><path d="M0.3 3.5 C2.5 0 6.5 0 8.7 3.5 C6.5 7 2.5 7 0.3 3.5Z" fill="#e6e6e6"/><circle cx="4.5" cy="3.5" r="1.9" fill="#282828"/><circle cx="4.5" cy="3.5" r="0.8" fill="#e6e6e6"/></svg>
<svg class="a" style="left:1010.5px;top:86.0px" width="9" height="7" viewBox="0 0 9 7"><rect x="0.3" y="1.3" width="8.4" height="5.6" rx="1" fill="#e6e6e6"/><rect x="2.8" y="0.2" width="3.4" height="1.6" fill="#e6e6e6"/><circle cx="4.5" cy="4.1" r="1.9" fill="#282828"/><circle cx="4.5" cy="4.1" r="1" fill="#e6e6e6"/></svg>
<svg class="a" style="left:882.5px;top:98.1px" width="4" height="5" viewBox="0 0 4 5"><path d="M0 0 V4.4 L3.3 2.2Z" fill="#cfcfcf"/></svg>
<div class="t" style="left:902.0px;top:97.94px;font-size:6.8px;color:#dcdcdc;">Ground Plane.001</div>
<svg class="a" style="left:890.5px;top:95.8px" width="9" height="9" viewBox="0 0 9 9"><path d="M1.2 1.5 H7.8 L4.5 7.8Z" fill="none" stroke="#e88a2a" stroke-width="1.1" stroke-linejoin="round"/><circle cx="1.2" cy="1.5" r="1.1" fill="#e88a2a"/><circle cx="7.8" cy="1.5" r="1.1" fill="#e88a2a"/><circle cx="4.5" cy="7.8" r="1.1" fill="#e88a2a"/></svg>
<svg class="a" style="left:963.5px;top:95.8px" width="9" height="9" viewBox="0 0 9 9"><path d="M1.2 1.5 H7.8 L4.5 7.8Z" fill="none" stroke="#3db8a0" stroke-width="1.1" stroke-linejoin="round"/><circle cx="1.2" cy="1.5" r="1.1" fill="#3db8a0"/><circle cx="7.8" cy="1.5" r="1.1" fill="#3db8a0"/><circle cx="4.5" cy="7.8" r="1.1" fill="#3db8a0"/></svg>
<svg class="a" style="left:1000.5px;top:96.8px" width="9" height="7" viewBox="0 0 9 7"><path d="M0.3 3.5 C2.5 0 6.5 0 8.7 3.5 C6.5 7 2.5 7 0.3 3.5Z" fill="#e6e6e6"/><circle cx="4.5" cy="3.5" r="1.9" fill="#282828"/><circle cx="4.5" cy="3.5" r="0.8" fill="#e6e6e6"/></svg>
<svg class="a" style="left:1010.5px;top:96.8px" width="9" height="7" viewBox="0 0 9 7"><rect x="0.3" y="1.3" width="8.4" height="5.6" rx="1" fill="#e6e6e6"/><rect x="2.8" y="0.2" width="3.4" height="1.6" fill="#e6e6e6"/><circle cx="4.5" cy="4.1" r="1.9" fill="#282828"/><circle cx="4.5" cy="4.1" r="1" fill="#e6e6e6"/></svg>
<svg class="a" style="left:882.5px;top:108.9px" width="4" height="5" viewBox="0 0 4 5"><path d="M0 0 V4.4 L3.3 2.2Z" fill="#cfcfcf"/></svg>
<div class="t" style="left:902.0px;top:108.74px;font-size:6.8px;color:#dcdcdc;">Point</div>
<svg class="a" style="left:891.0px;top:106.6px" width="8" height="9" viewBox="0 0 8 9"><circle cx="4" cy="3.3" r="2.6" fill="none" stroke="#e88a2a" stroke-width="1.1"/><path d="M2.5 6.3 H5.5 M2.8 7.8 H5.2" stroke="#e88a2a" stroke-width="0.9"/></svg>
<svg class="a" style="left:921.5px;top:106.6px" width="8" height="9" viewBox="0 0 8 9"><circle cx="4" cy="3.6" r="3" fill="none" stroke="#3db8a0" stroke-width="1"/><circle cx="4" cy="3.6" r="1" fill="#3db8a0"/><path d="M4 6.6 V8.5" stroke="#3db8a0" stroke-width="1"/></svg>
<svg class="a" style="left:1000.5px;top:107.6px" width="9" height="7" viewBox="0 0 9 7"><path d="M0.3 3.5 C2.5 0 6.5 0 8.7 3.5 C6.5 7 2.5 7 0.3 3.5Z" fill="#e6e6e6"/><circle cx="4.5" cy="3.5" r="1.9" fill="#282828"/><circle cx="4.5" cy="3.5" r="0.8" fill="#e6e6e6"/></svg>
<svg class="a" style="left:1010.5px;top:107.6px" width="9" height="7" viewBox="0 0 9 7"><rect x="0.3" y="1.3" width="8.4" height="5.6" rx="1" fill="#e6e6e6"/><rect x="2.8" y="0.2" width="3.4" height="1.6" fill="#e6e6e6"/><circle cx="4.5" cy="4.1" r="1.9" fill="#282828"/><circle cx="4.5" cy="4.1" r="1" fill="#e6e6e6"/></svg>
<svg class="a" style="left:882.5px;top:130.5px" width="4" height="5" viewBox="0 0 4 5"><path d="M0 0 V4.4 L3.3 2.2Z" fill="#cfcfcf"/></svg>
<div class="t" style="left:902.0px;top:130.34px;font-size:6.8px;color:#f0a040;">Suzanne</div>
<div class="a" style="left:890.0px;top:128.2px;width:11.0px;height:9.0px;background:#5a6e96;border-radius:1.5px"></div>
<svg class="a" style="left:890.5px;top:128.2px" width="9" height="9" viewBox="0 0 9 9"><path d="M1.2 1.5 H7.8 L4.5 7.8Z" fill="none" stroke="#e88a2a" stroke-width="1.1" stroke-linejoin="round"/><circle cx="1.2" cy="1.5" r="1.1" fill="#e88a2a"/><circle cx="7.8" cy="1.5" r="1.1" fill="#e88a2a"/><circle cx="4.5" cy="7.8" r="1.1" fill="#e88a2a"/></svg>
<svg class="a" style="left:946.0px;top:128.2px" width="9" height="9" viewBox="0 0 9 9"><path d="M1.2 1.5 H7.8 L4.5 7.8Z" fill="none" stroke="#3db8a0" stroke-width="1.1" stroke-linejoin="round"/><circle cx="1.2" cy="1.5" r="1.1" fill="#3db8a0"/><circle cx="7.8" cy="1.5" r="1.1" fill="#3db8a0"/><circle cx="4.5" cy="7.8" r="1.1" fill="#3db8a0"/></svg>
<svg class="a" style="left:935.0px;top:128.2px" width="9" height="9" viewBox="0 0 9 9"><path d="M1.2 8 L4.6 4.6" stroke="#7aa0e0" stroke-width="1.8" stroke-linecap="round"/><path d="M4.2 1.6 C5.2 0.4 7.6 0.4 8.3 1.8 L6.7 2.9 L6.4 4.4 L4.9 5 C3.6 4.2 3.4 2.6 4.2 1.6Z" fill="#7aa0e0"/></svg>
<svg class="a" style="left:1000.5px;top:129.2px" width="9" height="7" viewBox="0 0 9 7"><path d="M0.3 3.5 C2.5 0 6.5 0 8.7 3.5 C6.5 7 2.5 7 0.3 3.5Z" fill="#e6e6e6"/><circle cx="4.5" cy="3.5" r="1.9" fill="#282828"/><circle cx="4.5" cy="3.5" r="0.8" fill="#e6e6e6"/></svg>
<svg class="a" style="left:1010.5px;top:129.2px" width="9" height="7" viewBox="0 0 9 7"><rect x="0.3" y="1.3" width="8.4" height="5.6" rx="1" fill="#e6e6e6"/><rect x="2.8" y="0.2" width="3.4" height="1.6" fill="#e6e6e6"/><circle cx="4.5" cy="4.1" r="1.9" fill="#282828"/><circle cx="4.5" cy="4.1" r="1" fill="#e6e6e6"/></svg>
<svg class="a" style="left:870.5px;top:120.3px" width="5" height="4" viewBox="0 0 5 4"><path d="M0 0 H4.5 L2.25 3Z" fill="#ccc"/></svg>
<svg class="a" style="left:881.0px;top:117.9px" width="8" height="8" viewBox="0 0 8 8"><rect x="0.5" y="0.5" width="7" height="2" fill="#ddd"/><rect x="0.8" y="3" width="6.4" height="4.2" fill="none" stroke="#ddd" stroke-width="0.9"/><rect x="2.8" y="4.2" width="2.4" height="1" fill="#ddd"/></svg>
<div class="t" style="left:892.0px;top:119.24px;font-size:6.8px;color:#dcdcdc;">Collection 2</div>
<svg class="a" style="left:851.0px;top:48.0px" width="4" height="6" viewBox="0 0 4 6"><path d="M3.2 0.5 L0.8 3 L3.2 5.5" fill="none" stroke="#999" stroke-width="0.8"/></svg>
<div class="a" style="left:858.0px;top:209.0px;width:166.0px;height:363.0px;background:#303030;"></div>
<div class="a" style="left:858.0px;top:209.0px;width:166.0px;height:13.0px;background:#282828;"></div>
<svg class="a" style="left:862.0px;top:211.0px" width="16" height="9" viewBox="0 0 16 9"><rect x="0.8" y="0.8" width="8" height="3.2" rx="1.6" fill="none" stroke="#eee" stroke-width="0.9"/><circle cx="6.8" cy="2.4" r="1.3" fill="#eee"/><rect x="0.8" y="5" width="8" height="3.2" rx="1.6" fill="#eee"/><circle cx="2.6" cy="6.6" r="1.1" fill="#282828"/><path d="M10.5 3.2 L11.8 4.5 L13.1 3.2" fill="none" stroke="#ccc" stroke-width="0.8"/></svg>
<div class="a" style="left:912.5px;top:211.2px;width:59.0px;height:8.6px;background:#1d1d1d;border-radius:2px"></div>
<svg class="a" style="left:915.0px;top:212.0px" width="8" height="8" viewBox="0 0 8 8"><circle cx="4.8" cy="3" r="2.3" fill="none" stroke="#ddd" stroke-width="0.9"/><path d="M3.2 4.6 L0.8 7.2" stroke="#ddd" stroke-width="1.1"/></svg>
<div class="a" style="left:1012.5px;top:211.5px;width:9.0px;height:8.2px;background:#2c2c2c;border-radius:2px"></div>
<svg class="a" style="left:1015.0px;top:214.5px" width="4" height="3" viewBox="0 0 4 3"><path d="M0.4 0.4 L2.0 2.4 L3.6 0.4" fill="none" stroke="#cfcfcf" stroke-width="0.9"/></svg>
<div class="a" style="left:858.0px;top:222.0px;width:14.0px;height:350.0px;background:#1f1f1f;"></div>
<div class="a" style="left:858.0px;top:223.0px;width:14.0px;height:24.0px;background:#191919;"></div>
<div class="a" style="left:858.5px;top:248.0px;width:13.5px;height:13.0px;background:#2e2e2e;border-radius:2px 0 0 2px"></div>
<svg class="a" style="left:860.5px;top:230.5px" width="9" height="9" viewBox="0 0 9 9"><path d="M2.5 1 V4 M1 1 V3 Q2.5 5 4 3 V1" fill="none" stroke="#ddd" stroke-width="0.9"/><rect x="1.8" y="4.5" width="1.5" height="4" fill="#ddd"/><circle cx="2.5" cy="8" r="0.9" fill="#ddd"/><path d="M5.5 1 L7 4 L8.5 1 M7 4 V8.5" fill="none" stroke="#ddd" stroke-width="1"/></svg>
<svg class="a" style="left:860.5px;top:250.0px" width="9" height="9" viewBox="0 0 9 9"><rect x="0.8" y="3" width="7.4" height="5" fill="none" stroke="#ddd" stroke-width="0.9"/><path d="M2 3 L3 1 H6 L7 3" fill="none" stroke="#ddd" stroke-width="0.9"/><rect x="2" y="5" width="5" height="1.5" fill="#ddd"/></svg>
<svg class="a" style="left:860.5px;top:264.0px" width="9" height="9" viewBox="0 0 9 9"><rect x="0.8" y="1" width="7.4" height="3" fill="#ddd"/><rect x="1.5" y="4.5" width="6" height="3.5" fill="none" stroke="#ddd" stroke-width="0.9"/><rect x="3.5" y="6" width="2" height="1" fill="#ddd"/></svg>
<svg class="a" style="left:860.5px;top:279.5px" width="9" height="9" viewBox="0 0 9 9"><rect x="2.5" y="0.8" width="6" height="6" rx="1" fill="#777"/><rect x="0.8" y="2.5" width="6" height="6" rx="1" fill="#bbb"/><path d="M2.5 7.5 L3.8 4 L5 7.5" fill="none" stroke="#333" stroke-width="0.8"/></svg>
<svg class="a" style="left:860.5px;top:295.0px" width="9" height="9" viewBox="0 0 9 9"><path d="M3.5 0.5 L1 6 L5.5 7 Z" fill="#ddd"/><circle cx="6.5" cy="5.5" r="2" fill="none" stroke="#ddd" stroke-width="1"/><circle cx="7" cy="1.5" r="0.8" fill="#ddd"/></svg>
<svg class="a" style="left:860.5px;top:310.5px" width="9" height="9" viewBox="0 0 9 9"><circle cx="4.5" cy="4.5" r="3.6" fill="none" stroke="#d04545" stroke-width="1.1"/><path d="M2 2.5 C4 3 4 5 3 6.5 M5.5 1 C5 3 7 4 8 4" fill="none" stroke="#d04545" stroke-width="0.9"/></svg>
<svg class="a" style="left:860.5px;top:330.5px" width="9" height="9" viewBox="0 0 9 9"><rect x="0.8" y="0.8" width="7.4" height="2.2" fill="#ddd"/><rect x="1.2" y="3.5" width="6.6" height="4.5" fill="none" stroke="#ddd" stroke-width="0.9"/><rect x="3.3" y="4.8" width="2.4" height="1" fill="#ddd"/></svg>
<svg class="a" style="left:860.5px;top:349.0px" width="9" height="9" viewBox="0 0 9 9"><path d="M0.6 2.6 V0.6 H2.6 M6.4 0.6 H8.4 V2.6 M8.4 6.4 V8.4 H6.4 M2.6 8.4 H0.6 V6.4" fill="none" stroke="#e88a2a" stroke-width="0.9"/><rect x="2.3" y="2.3" width="4.4" height="4.4" fill="#e88a2a"/></svg>
<svg class="a" style="left:860.5px;top:365.0px" width="9" height="9" viewBox="0 0 9 9"><path d="M1.2 8 L5 4.2 M4.5 1.5 C5.5 0.5 7.5 0.5 8.2 2 L6.8 3 L6.5 4.5 L5 5 C3.8 4.2 3.8 2.5 4.5 1.5Z" fill="none" stroke="#5a9ae6" stroke-width="1.3"/></svg>
<svg class="a" style="left:860.5px;top:380.0px" width="9" height="9" viewBox="0 0 9 9"><circle cx="1.5" cy="1.5" r="1.2" fill="#5a9ae6"/><circle cx="7.5" cy="7.5" r="1.2" fill="#5a9ae6"/><circle cx="7" cy="2" r="1" fill="#5a9ae6"/><path d="M1.5 1.5 L7.5 7.5 M1.5 1.5 V5" stroke="#5a9ae6" stroke-width="0.8"/></svg>
<svg class="a" style="left:860.5px;top:395.0px" width="9" height="9" viewBox="0 0 9 9"><circle cx="4.5" cy="4.5" r="3.3" fill="none" stroke="#5a9ae6" stroke-width="0.9"/><circle cx="4.5" cy="4.5" r="1.4" fill="#5a9ae6"/><circle cx="7.2" cy="1.8" r="1" fill="#5a9ae6"/></svg>
<svg class="a" style="left:860.5px;top:410.2px" width="9" height="9" viewBox="0 0 9 9"><ellipse cx="3.3" cy="5" rx="2.6" ry="2.8" fill="none" stroke="#5a9ae6" stroke-width="1.1"/><ellipse cx="5.7" cy="4" rx="2.6" ry="2.8" fill="none" stroke="#5a9ae6" stroke-width="1.1"/></svg>
<svg class="a" style="left:860.5px;top:425.9px" width="9" height="9" viewBox="0 0 9 9"><path d="M1 1.2 H8 L4.5 8Z" fill="none" stroke="#3db8a0" stroke-width="1.3" stroke-linejoin="round"/></svg>
<svg class="a" style="left:860.5px;top:440.2px" width="9" height="9" viewBox="0 0 9 9"><circle cx="4.5" cy="4.5" r="3.6" fill="#d05050"/><path d="M4.5 0.9 A3.6 3.6 0 0 0 0.9 4.5 L4.5 4.5Z M4.5 4.5 L8.1 4.5 A3.6 3.6 0 0 1 4.5 8.1Z" fill="#2a1a1a"/></svg>
<svg class="a" style="left:860.5px;top:459.1px" width="9" height="9" viewBox="0 0 9 9"><defs><pattern id="tx" width="2.4" height="2.4" patternUnits="userSpaceOnUse"><rect width="1.2" height="1.2" fill="#d05050"/><rect x="1.2" y="1.2" width="1.2" height="1.2" fill="#d05050"/></pattern></defs><rect x="0.6" y="0.6" width="7.8" height="7.8" fill="url(#tx)"/></svg>
<svg class="a" style="left:877.0px;top:228.0px" width="11" height="9" viewBox="0 0 11 9"><path d="M4 0.8 L1.2 7 L6 7.8 Z" fill="#ddd"/><circle cx="7.5" cy="6" r="2.2" fill="none" stroke="#ddd" stroke-width="1"/><circle cx="8" cy="1.5" r="0.9" fill="#ddd"/></svg>
<div class="t" style="left:890.0px;top:229.74px;font-size:6.8px;color:#e0e0e0;">Shader Examples</div>
<svg class="a" style="left:1012.0px;top:228.0px" width="9" height="9" viewBox="0 0 9 9"><path d="M1 8 L4 5 M3 3.5 L5.5 6 M4 2.5 L6.8 1.2 L7.8 2.2 L6.5 5" stroke="#999" fill="none" stroke-width="0.9"/></svg>
<div class="t" style="right:91.0px;top:249.34px;font-size:6.8px;color:#d6d6d6;">Render Engine</div>
<div class="a" style="left:938.0px;top:248.0px;width:83.7px;height:8.8px;background:#282828;border-radius:2px"></div>
<div class="t" style="left:941.5px;top:249.34px;font-size:6.8px;color:#e6e6e6;">Cycles</div>
<svg class="a" style="left:1017.0px;top:251.6px" width="4" height="3" viewBox="0 0 4 3"><path d="M0.4 0.4 L2.0 2.4 L3.6 0.4" fill="none" stroke="#cfcfcf" stroke-width="0.9"/></svg>
<div class="t" style="right:91.0px;top:262.94px;font-size:6.8px;color:#d6d6d6;">Feature Set</div>
<div class="a" style="left:938.0px;top:261.6px;width:83.7px;height:8.8px;background:#282828;border-radius:2px"></div>
<div class="t" style="left:941.5px;top:262.94px;font-size:6.8px;color:#e6e6e6;">Supported</div>
<svg class="a" style="left:1017.0px;top:265.2px" width="4" height="3" viewBox="0 0 4 3"><path d="M0.4 0.4 L2.0 2.4 L3.6 0.4" fill="none" stroke="#cfcfcf" stroke-width="0.9"/></svg>
<div class="t" style="right:91.0px;top:276.54px;font-size:6.8px;color:#d6d6d6;">Device</div>
<div class="a" style="left:938.0px;top:275.2px;width:83.7px;height:8.8px;background:#282828;border-radius:2px"></div>
<div class="t" style="left:941.5px;top:276.54px;font-size:6.8px;color:#e6e6e6;">GPU Compute</div>
<svg class="a" style="left:1017.0px;top:278.8px" width="4" height="3" viewBox="0 0 4 3"><path d="M0.4 0.4 L2.0 2.4 L3.6 0.4" fill="none" stroke="#cfcfcf" stroke-width="0.9"/></svg>
<div class="a" style="left:937.5px;top:288.0px;width:7.0px;height:7.0px;background:#545454;border-radius:1.5px"></div>
<div class="t" style="left:946.5px;top:288.74px;font-size:6.8px;color:#dedede;">Open Shading Language</div>
<div class="a" style="left:877.0px;top:302.0px;width:145.0px;height:193.0px;background:#383838;border-radius:3px"></div>
<div class="a" style="left:877.0px;top:302.0px;width:145.0px;height:14.0px;background:#3d3d3d;border-radius:3px 3px 0 0"></div>
<svg class="a" style="left:881.0px;top:307.5px" width="6" height="4" viewBox="0 0 6 4"><path d="M0.5 0.5 L3 3 L5.5 0.5" fill="none" stroke="#bbb" stroke-width="0.8"/></svg>
<div class="t" style="left:888.0px;top:306.54px;font-size:6.8px;color:#e0e0e0;">Sampling</div>
<svg class="a" style="left:1012.0px;top:305.0px" width="8" height="5" viewBox="0 0 8 5"><path d="M0 0.8 H7 M0 2.6 H7 M0 4.4 H7" stroke="#444" stroke-width="0.7"/></svg>
<div class="a" style="left:877.0px;top:316.0px;width:145.0px;height:13.0px;background:#3d3d3d;"></div>
<svg class="a" style="left:889.5px;top:321.0px" width="6" height="4" viewBox="0 0 6 4"><path d="M0.5 0.5 L3 3 L5.5 0.5" fill="none" stroke="#bbb" stroke-width="0.8"/></svg>
<div class="t" style="left:897.5px;top:319.94px;font-size:6.8px;color:#e0e0e0;">Viewport</div>
<svg class="a" style="left:1000.0px;top:318.5px" width="8" height="8" viewBox="0 0 8 8"><rect x="0.5" y="0.5" width="1.5" height="1.5" fill="#ddd"/><rect x="0.5" y="3.2" width="1.5" height="1.5" fill="#ddd"/><rect x="0.5" y="5.9" width="1.5" height="1.5" fill="#ddd"/><path d="M3.5 1.2 H7.5 M3.5 3.9 H7.5 M3.5 6.6 H7.5" stroke="#ddd" stroke-width="0.8"/></svg>
<div class="t" style="right:90.1px;top:336.04px;font-size:6.8px;color:#d6d6d6;">Noise Threshold</div>
<svg class="a" style="left:939.0px;top:336.1px" width="7" height="7" viewBox="0 0 7 7"><rect x="0" y="0" width="7" height="7" rx="1.2" fill="#4772b3"/><path d="M1.4 3.5 L2.9 5 L5.6 2" fill="none" stroke="#fff" stroke-width="1"/></svg>
<div class="a" style="left:949.7px;top:334.3px;width:68.5px;height:9.4px;background:#545454;border-radius:2px"></div>
<div class="t" style="left:784.0px;width:400px;text-align:center;top:336.04px;font-size:6.8px;color:#e6e6e6;">0.1000</div>
<div class="a" style="left:939.0px;top:347.6px;width:79.2px;height:20.2px;background:#545454;border-radius:2px"></div>
<div class="a" style="left:939.0px;top:357.5px;width:79.2px;height:0.6px;background:#3e3e3e;"></div>
<div class="t" style="right:90.1px;top:349.94px;font-size:6.8px;color:#d6d6d6;">Max Samples</div>
<div class="a" style="left:939.0px;top:347.6px;width:79.2px;height:9.9px;background:#545454;border-radius:2px"></div>
<div class="t" style="left:778.6px;width:400px;text-align:center;top:349.94px;font-size:6.8px;color:#e6e6e6;">1024</div>
<div class="t" style="right:90.1px;top:360.64px;font-size:6.8px;color:#d6d6d6;">Min Samples</div>
<div class="a" style="left:939.0px;top:358.1px;width:79.2px;height:9.7px;background:#545454;border-radius:2px"></div>
<div class="t" style="left:778.6px;width:400px;text-align:center;top:360.64px;font-size:6.8px;color:#e6e6e6;">0</div>
<svg class="a" style="left:891.0px;top:376.5px" width="4" height="6" viewBox="0 0 4 6"><path d="M0.5 0.5 L3 3 L0.5 5.5" fill="none" stroke="#bbb" stroke-width="0.8"/></svg>
<svg class="a" style="left:895.5px;top:375.0px" width="7" height="7" viewBox="0 0 7 7"><rect x="0" y="0" width="7" height="7" rx="1.2" fill="#4772b3"/><path d="M1.4 3.5 L2.9 5 L5.6 2" fill="none" stroke="#fff" stroke-width="1"/></svg>
<div class="t" style="left:904.0px;top:377.04px;font-size:6.8px;color:#e0e0e0;">Denoise</div>
<div class="a" style="left:877.0px;top:387.2px;width:145.0px;height:12.5px;background:#3d3d3d;"></div>
<svg class="a" style="left:889.5px;top:392.2px" width="6" height="4" viewBox="0 0 6 4"><path d="M0.5 0.5 L3 3 L5.5 0.5" fill="none" stroke="#bbb" stroke-width="0.8"/></svg>
<div class="t" style="left:897.5px;top:390.64px;font-size:6.8px;color:#e0e0e0;">Render</div>
<svg class="a" style="left:1000.0px;top:389.5px" width="8" height="8" viewBox="0 0 8 8"><rect x="0.5" y="0.5" width="1.5" height="1.5" fill="#ddd"/><rect x="0.5" y="3.2" width="1.5" height="1.5" fill="#ddd"/><rect x="0.5" y="5.9" width="1.5" height="1.5" fill="#ddd"/><path d="M3.5 1.2 H7.5 M3.5 3.9 H7.5 M3.5 6.6 H7.5" stroke="#ddd" stroke-width="0.8"/></svg>
<div class="t" style="right:90.1px;top:407.14px;font-size:6.8px;color:#d6d6d6;">Noise Threshold</div>
<svg class="a" style="left:939.0px;top:407.0px" width="7" height="7" viewBox="0 0 7 7"><rect x="0" y="0" width="7" height="7" rx="1.2" fill="#4772b3"/><path d="M1.4 3.5 L2.9 5 L5.6 2" fill="none" stroke="#fff" stroke-width="1"/></svg>
<div class="a" style="left:949.7px;top:405.2px;width:68.5px;height:9.6px;background:#545454;border-radius:2px"></div>
<div class="t" style="left:784.0px;width:400px;text-align:center;top:407.14px;font-size:6.8px;color:#e6e6e6;">0.0100</div>
<div class="a" style="left:939.0px;top:418.5px;width:79.2px;height:31.0px;background:#545454;border-radius:2px"></div>
<div class="a" style="left:939.0px;top:428.6px;width:79.2px;height:0.6px;background:#3e3e3e;"></div>
<div class="a" style="left:939.0px;top:439.2px;width:79.2px;height:0.6px;background:#3e3e3e;"></div>
<div class="t" style="right:90.1px;top:420.74px;font-size:6.8px;color:#d6d6d6;">Max Samples</div>
<div class="a" style="left:939.0px;top:418.5px;width:79.2px;height:10.0px;background:#545454;border-radius:2px"></div>
<div class="t" style="left:778.6px;width:400px;text-align:center;top:420.74px;font-size:6.8px;color:#e6e6e6;">4096</div>
<div class="t" style="right:90.1px;top:431.34px;font-size:6.8px;color:#d6d6d6;">Min Samples</div>
<div class="a" style="left:939.0px;top:429.0px;width:79.2px;height:10.0px;background:#545454;border-radius:2px"></div>
<div class="t" style="left:778.6px;width:400px;text-align:center;top:431.34px;font-size:6.8px;color:#e6e6e6;">0</div>
<div class="t" style="right:90.1px;top:441.94px;font-size:6.8px;color:#d6d6d6;">Time Limit</div>
<div class="a" style="left:939.0px;top:439.5px;width:79.2px;height:10.0px;background:#545454;border-radius:2px"></div>
<div class="t" style="left:778.6px;width:400px;text-align:center;top:441.94px;font-size:6.8px;color:#e6e6e6;">0 sec</div>
<div class="a" style="left:877.0px;top:454.0px;width:145.0px;height:14.0px;background:#363636;"></div>
<svg class="a" style="left:891.0px;top:458.0px" width="4" height="6" viewBox="0 0 4 6"><path d="M0.5 0.5 L3 3 L0.5 5.5" fill="none" stroke="#bbb" stroke-width="0.8"/></svg>
<svg class="a" style="left:897.0px;top:457.0px" width="7" height="7" viewBox="0 0 7 7"><rect x="0" y="0" width="7" height="7" rx="1.2" fill="#4772b3"/><path d="M1.4 3.5 L2.9 5 L5.6 2" fill="none" stroke="#fff" stroke-width="1"/></svg>
<div class="t" style="left:905.0px;top:458.64px;font-size:6.8px;color:#e0e0e0;">Denoise</div>
<div class="a" style="left:877.0px;top:468.5px;width:145.0px;height:0.7px;background:#303030;"></div>
<svg class="a" style="left:891.0px;top:472.0px" width="4" height="6" viewBox="0 0 4 6"><path d="M0.5 0.5 L3 3 L0.5 5.5" fill="none" stroke="#bbb" stroke-width="0.8"/></svg>
<div class="t" style="left:896.0px;top:472.14px;font-size:6.8px;color:#e0e0e0;">Lights</div>
<div class="a" style="left:877.0px;top:482.0px;width:145.0px;height:0.7px;background:#303030;"></div>
<svg class="a" style="left:891.0px;top:485.5px" width="4" height="6" viewBox="0 0 4 6"><path d="M0.5 0.5 L3 3 L0.5 5.5" fill="none" stroke="#bbb" stroke-width="0.8"/></svg>
<div class="t" style="left:896.0px;top:485.74px;font-size:6.8px;color:#e0e0e0;">Advanced</div>
<div class="a" style="left:877.0px;top:496.7px;width:145.0px;height:13.3px;background:#3d3d3d;border-radius:3px"></div>
<svg class="a" style="left:883.0px;top:500.3px" width="4" height="6" viewBox="0 0 4 6"><path d="M0.5 0.5 L3 3 L0.5 5.5" fill="none" stroke="#bbb" stroke-width="0.8"/></svg>
<div class="t" style="left:888.3px;top:500.99px;font-size:6.8px;color:#e0e0e0;">Light Paths</div>
<svg class="a" style="left:1000.5px;top:499.5px" width="8" height="8" viewBox="0 0 8 8"><rect x="0.5" y="0.5" width="1.5" height="1.5" fill="#ddd"/><rect x="0.5" y="3.2" width="1.5" height="1.5" fill="#ddd"/><rect x="0.5" y="5.9" width="1.5" height="1.5" fill="#ddd"/><path d="M3.5 1.2 H7.5 M3.5 3.9 H7.5 M3.5 6.6 H7.5" stroke="#ddd" stroke-width="0.8"/></svg>
<svg class="a" style="left:1012.0px;top:501.1px" width="8" height="5" viewBox="0 0 8 5"><path d="M0 0.8 H7 M0 2.6 H7 M0 4.4 H7" stroke="#444" stroke-width="0.7"/></svg>
<div class="a" style="left:877.0px;top:511.0px;width:145.0px;height:13.8px;background:#3d3d3d;border-radius:3px"></div>
<svg class="a" style="left:883.0px;top:514.9px" width="4" height="6" viewBox="0 0 4 6"><path d="M0.5 0.5 L3 3 L0.5 5.5" fill="none" stroke="#bbb" stroke-width="0.8"/></svg>
<div class="t" style="left:888.3px;top:515.54px;font-size:6.8px;color:#e0e0e0;">Volumes</div>
<svg class="a" style="left:1012.0px;top:515.7px" width="8" height="5" viewBox="0 0 8 5"><path d="M0 0.8 H7 M0 2.6 H7 M0 4.4 H7" stroke="#444" stroke-width="0.7"/></svg>
<div class="a" style="left:877.0px;top:525.8px;width:145.0px;height:13.7px;background:#3d3d3d;border-radius:3px"></div>
<svg class="a" style="left:883.0px;top:529.6px" width="4" height="6" viewBox="0 0 4 6"><path d="M0.5 0.5 L3 3 L0.5 5.5" fill="none" stroke="#bbb" stroke-width="0.8"/></svg>
<div class="t" style="left:888.3px;top:530.29px;font-size:6.8px;color:#e0e0e0;">Curves</div>
<svg class="a" style="left:1012.0px;top:530.4px" width="8" height="5" viewBox="0 0 8 5"><path d="M0 0.8 H7 M0 2.6 H7 M0 4.4 H7" stroke="#444" stroke-width="0.7"/></svg>
<div class="a" style="left:877.0px;top:540.6px;width:145.0px;height:13.0px;background:#3d3d3d;border-radius:3px"></div>
<svg class="a" style="left:883.0px;top:544.1px" width="4" height="6" viewBox="0 0 4 6"><path d="M0.5 0.5 L3 3 L0.5 5.5" fill="none" stroke="#bbb" stroke-width="0.8"/></svg>
<div class="a" style="left:888.5px;top:543.8px;width:6.5px;height:6.5px;background:#4a4a4a;border-radius:1.2px"></div>
<div class="t" style="left:896.0px;top:544.74px;font-size:6.8px;color:#e0e0e0;">Simplify</div>
<svg class="a" style="left:1012.0px;top:544.9px" width="8" height="5" viewBox="0 0 8 5"><path d="M0 0.8 H7 M0 2.6 H7 M0 4.4 H7" stroke="#444" stroke-width="0.7"/></svg>
<div class="a" style="left:877.0px;top:555.0px;width:145.0px;height:13.0px;background:#3d3d3d;border-radius:3px"></div>
<svg class="a" style="left:883.0px;top:558.5px" width="4" height="6" viewBox="0 0 4 6"><path d="M0.5 0.5 L3 3 L0.5 5.5" fill="none" stroke="#bbb" stroke-width="0.8"/></svg>
<div class="a" style="left:888.5px;top:558.2px;width:6.5px;height:6.5px;background:#4a4a4a;border-radius:1.2px"></div>
<div class="t" style="left:896.0px;top:559.14px;font-size:6.8px;color:#e0e0e0;">Motion Blur</div>
<svg class="a" style="left:1012.0px;top:559.3px" width="8" height="5" viewBox="0 0 8 5"><path d="M0 0.8 H7 M0 2.6 H7 M0 4.4 H7" stroke="#444" stroke-width="0.7"/></svg>
<div class="a" style="left:0.0px;top:572.0px;width:1024.0px;height:8.0px;background:#1d1d1d;"></div>
<svg class="a" style="left:7.0px;top:574.0px" width="6" height="8" viewBox="0 0 6 8"><rect x="0.5" y="0.5" width="4.5" height="7" rx="2" fill="none" stroke="#bbb" stroke-width="0.9"/><rect x="0.8" y="0.8" width="2" height="3" fill="#bbb"/></svg>
<div class="t" style="left:18.0px;top:575.74px;font-size:6.8px;color:#bdbdbd;">Select</div>
<svg class="a" style="left:121.0px;top:574.0px" width="6" height="8" viewBox="0 0 6 8"><rect x="0.5" y="0.5" width="4.5" height="7" rx="2" fill="none" stroke="#bbb" stroke-width="0.9"/><rect x="2" y="1.5" width="1.5" height="2" fill="#bbb"/></svg>
<div class="t" style="left:133.0px;top:575.74px;font-size:6.8px;color:#bdbdbd;">Pan View</div>
<svg class="a" style="left:236.0px;top:574.0px" width="6" height="8" viewBox="0 0 6 8"><rect x="0.5" y="0.5" width="4.5" height="7" rx="2" fill="none" stroke="#bbb" stroke-width="0.9"/><rect x="2.7" y="0.8" width="2" height="3" fill="#bbb"/></svg>
<div class="t" style="right:3.0px;top:575.00px;font-size:6.5px;color:#9a9a9a;">3.6.5</div>
</body></html>
